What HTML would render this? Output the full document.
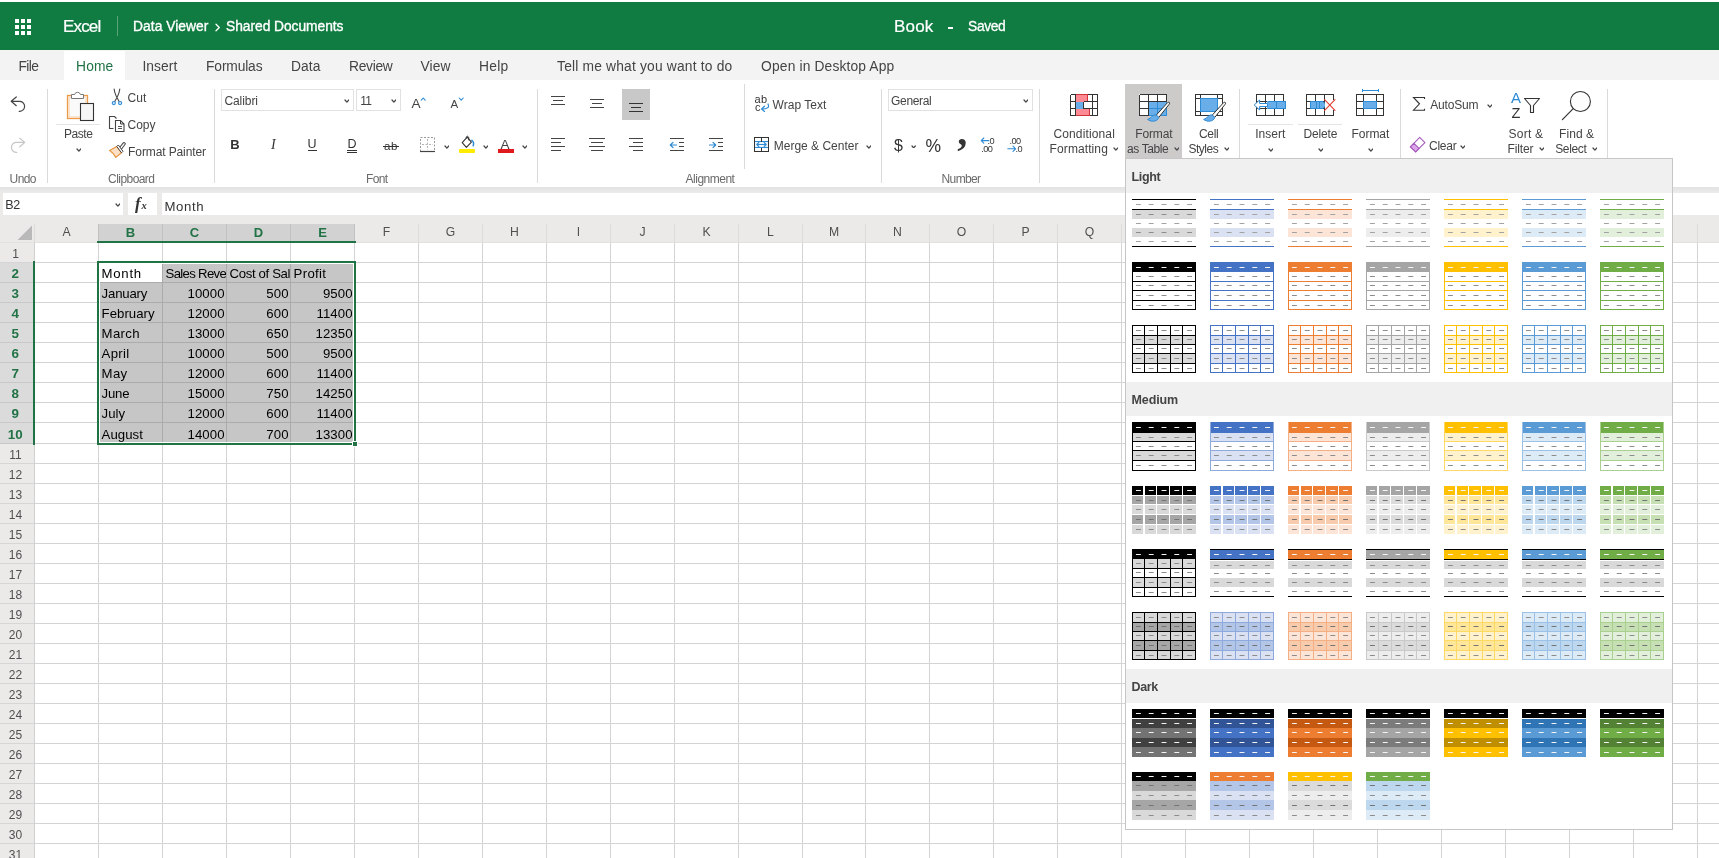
<!DOCTYPE html>
<html lang="en"><head><meta charset="utf-8"><title>Book - Excel</title>
<style>
*{box-sizing:border-box;margin:0;padding:0}
html,body{width:1719px;height:858px;overflow:hidden;background:#fff}
body{font-family:"Liberation Sans",sans-serif;position:relative}
#root{position:absolute;left:0;top:0;width:1719px;height:858px;overflow:hidden;will-change:transform}
#root div,#root svg.a{position:absolute}
.t{position:absolute;white-space:nowrap}
.c{position:absolute;white-space:nowrap;overflow:hidden;font-size:13.2px;line-height:19px;height:19px;color:#000}
</style></head>
<body><div id="root">
<div style="left:0px;top:2px;width:1719px;height:48px;background:#107c41;"></div>
<div style="left:15px;top:19px;width:4px;height:4px;background:#fff;"></div>
<div style="left:21px;top:19px;width:4px;height:4px;background:#fff;"></div>
<div style="left:27px;top:19px;width:4px;height:4px;background:#fff;"></div>
<div style="left:15px;top:25px;width:4px;height:4px;background:#fff;"></div>
<div style="left:21px;top:25px;width:4px;height:4px;background:#fff;"></div>
<div style="left:27px;top:25px;width:4px;height:4px;background:#fff;"></div>
<div style="left:15px;top:31px;width:4px;height:4px;background:#fff;"></div>
<div style="left:21px;top:31px;width:4px;height:4px;background:#fff;"></div>
<div style="left:27px;top:31px;width:4px;height:4px;background:#fff;"></div>
<span class="t" style="left:63.10px;top:17.71px;font-size:17px;line-height:17px;color:#fff;letter-spacing:-0.854px;-webkit-text-stroke:0.2px #fff;">Excel</span>
<div style="left:117px;top:16px;width:1px;height:20px;background:#5aa37c;"></div>
<span class="t" style="left:133.10px;top:19.62px;font-size:13.8px;line-height:13.8px;color:#fff;letter-spacing:0.035px;-webkit-text-stroke:0.35px #fff;">Data Viewer</span>
<svg class="a" style="left:213px;top:22px" width="8" height="10" viewBox="0 0 8 10"><path d="M3 2.2 L6.3 5.5 L3 8.8" fill="none" stroke="#fff" stroke-width="1.3" stroke-linecap="round" stroke-linejoin="round"/></svg>
<span class="t" style="left:226.10px;top:19.62px;font-size:13.8px;line-height:13.8px;color:#fff;letter-spacing:-0.051px;-webkit-text-stroke:0.35px #fff;">Shared Documents</span>
<span class="t" style="left:894.10px;top:17.71px;font-size:17px;line-height:17px;color:#fff;letter-spacing:0.138px;-webkit-text-stroke:0.2px #fff;">Book</span>
<div style="left:948px;top:27.4px;width:5px;height:1.3px;background:#fff;"></div>
<span class="t" style="left:968.10px;top:19.62px;font-size:13.8px;line-height:13.8px;color:#fff;letter-spacing:-0.365px;-webkit-text-stroke:0.3px #fff;">Saved</span>
<div style="left:0px;top:50px;width:1719px;height:30px;background:#f3f3f3;"></div>
<div style="left:64px;top:51px;width:61px;height:29px;background:#fff;"></div>
<span class="t" style="left:18.40px;top:60.42px;font-size:13.8px;line-height:13.8px;color:#444;letter-spacing:-0.559px;">File</span>
<span class="t" style="left:76.10px;top:60.42px;font-size:13.8px;line-height:13.8px;color:#217346;letter-spacing:0.123px;">Home</span>
<span class="t" style="left:142.40px;top:60.42px;font-size:13.8px;line-height:13.8px;color:#444;letter-spacing:0.082px;">Insert</span>
<span class="t" style="left:206.10px;top:60.42px;font-size:13.8px;line-height:13.8px;color:#444;letter-spacing:-0.151px;">Formulas</span>
<span class="t" style="left:291.10px;top:60.42px;font-size:13.8px;line-height:13.8px;color:#444;letter-spacing:0.038px;">Data</span>
<span class="t" style="left:349.10px;top:60.42px;font-size:13.8px;line-height:13.8px;color:#444;letter-spacing:-0.324px;">Review</span>
<span class="t" style="left:420.60px;top:60.42px;font-size:13.8px;line-height:13.8px;color:#444;letter-spacing:0.035px;">View</span>
<span class="t" style="left:479.10px;top:60.42px;font-size:13.8px;line-height:13.8px;color:#444;letter-spacing:0.230px;">Help</span>
<span class="t" style="left:557.10px;top:60.42px;font-size:13.8px;line-height:13.8px;color:#444;letter-spacing:0.186px;">Tell me what you want to do</span>
<span class="t" style="left:761.10px;top:60.42px;font-size:13.8px;line-height:13.8px;color:#444;letter-spacing:0.152px;">Open in Desktop App</span>
<div style="left:47px;top:89px;width:1px;height:94px;background:#dadada;"></div>
<div style="left:214px;top:89px;width:1px;height:94px;background:#dadada;"></div>
<div style="left:537px;top:89px;width:1px;height:94px;background:#dadada;"></div>
<div style="left:744px;top:84px;width:1px;height:85px;background:#dadada;"></div>
<div style="left:881px;top:89px;width:1px;height:94px;background:#dadada;"></div>
<div style="left:1039px;top:89px;width:1px;height:94px;background:#dadada;"></div>
<div style="left:1239px;top:89px;width:1px;height:94px;background:#dadada;"></div>
<div style="left:1400px;top:89px;width:1px;height:94px;background:#dadada;"></div>
<div style="left:1607px;top:89px;width:1px;height:94px;background:#dadada;"></div>
<svg class="a" style="left:0px;top:86px" width="40" height="80" viewBox="0 0 40 80"><path d="M11.2 15.3 H20 A5 5 0 0 1 19.2 25.3 M16.3 11 L11.2 15.3 L16.3 19.7" fill="none" stroke="#444" stroke-width="1.2" stroke-linecap="round" stroke-linejoin="round"/><path d="M24.8 56.4 H16 A5 5 0 0 0 16.8 66.4 M19.8 52.2 L24.8 56.4 L19.8 60.8" fill="none" stroke="#c6c6c6" stroke-width="1.2" stroke-linecap="round" stroke-linejoin="round"/></svg>
<span class="t" style="left:9.60px;top:172.94px;font-size:12px;line-height:12px;color:#6a6a6a;letter-spacing:-0.596px;">Undo</span>
<svg class="a" style="left:64px;top:88px" width="34" height="36" viewBox="0 0 34 36"><rect x="3.5" y="7.5" width="20" height="23" fill="#fafafa" stroke="#ea9a4a" stroke-width="1.3"/><rect x="5" y="9" width="17" height="20" fill="none" stroke="#fbdcbc" stroke-width="1.4"/><path d="M7.5 10.5 V6.5 H10.6 A3 3 0 0 1 16.4 6.5 H19.5 V10.5 Z" fill="#fff" stroke="#777" stroke-width="1"/><rect x="16.5" y="15.5" width="13" height="17" fill="#f6f6f6" stroke="#333" stroke-width="1.1"/></svg>
<div style="left:56px;top:124px;width:44px;height:1px;background:#e4e4e4;"></div>
<span class="t" style="left:64.10px;top:127.94px;font-size:12px;line-height:12px;color:#444;letter-spacing:-0.477px;">Paste</span>
<svg class="a" style="left:75.6px;top:147.5px" width="5.8" height="4.1" viewBox="-1 -1 5.8 4.1"><path d="M0 0 L1.9 2.1 L3.8 0" fill="none" stroke="#444" stroke-width="1.25" stroke-linecap="round" stroke-linejoin="round"/></svg>
<svg class="a" style="left:110px;top:88px" width="16" height="18" viewBox="0 0 16 18"><path d="M4.1 1 C4.6 5 6 8.5 9.3 13.7 M9.8 1 C9.3 5 7.9 8.5 4.6 13.7" fill="none" stroke="#444" stroke-width="1.1" stroke-linecap="round"/><circle cx="3.8" cy="15.1" r="1.6" fill="#cfe6f8" stroke="#2e8bd6" stroke-width="1.1"/><circle cx="10.1" cy="15.1" r="1.6" fill="#cfe6f8" stroke="#2e8bd6" stroke-width="1.1"/></svg>
<span class="t" style="left:127.60px;top:92.44px;font-size:12px;line-height:12px;color:#444;letter-spacing:0.042px;">Cut</span>
<svg class="a" style="left:108px;top:115px" width="18" height="18" viewBox="0 0 18 18"><path d="M5.5 13.5 H1.5 V1.5 H6.5 L8.5 3.5" fill="none" stroke="#444" stroke-width="1.1"/><path d="M7.5 5.5 H12.5 L16 9 V16.5 H7.5 Z" fill="#fff" stroke="#444" stroke-width="1.1"/><path d="M12.5 5.5 V9 H16" fill="none" stroke="#444" stroke-width="1"/><path d="M10 11.5 H14 M10 13.5 H14" stroke="#444" stroke-width="0.9"/></svg>
<span class="t" style="left:127.60px;top:119.44px;font-size:12px;line-height:12px;color:#444;letter-spacing:-0.053px;">Copy</span>
<svg class="a" style="left:108px;top:142px" width="18" height="18" viewBox="0 0 18 18"><path d="M8.8 4.5 L1.6 8.6 C4 10 6 12.5 7.8 15.4 L13.5 10.8 Z" fill="#fbe0c6" stroke="#e8913a" stroke-width="1.1" stroke-linejoin="round"/><path d="M12.8 6 L16 1.8" stroke="#444" stroke-width="3.4" stroke-linecap="round"/><path d="M12.8 6 L16 1.8" stroke="#fff" stroke-width="1.4" stroke-linecap="round"/><path d="M8.8 4.5 L10.3 3 L15 9.3 L13.5 10.8 Z" fill="#fff" stroke="#444" stroke-width="1" stroke-linejoin="round"/></svg>
<span class="t" style="left:128.10px;top:146.24px;font-size:12px;line-height:12px;color:#444;letter-spacing:-0.111px;">Format Painter</span>
<span class="t" style="left:108.10px;top:172.94px;font-size:12px;line-height:12px;color:#6a6a6a;letter-spacing:-0.562px;">Clipboard</span>
<div style="left:221px;top:89px;width:133px;height:22px;background:#fff;border:1px solid #e1e1e1;"></div>
<div style="left:356px;top:89px;width:45px;height:22px;background:#fff;border:1px solid #e1e1e1;"></div>
<span class="t" style="left:224.40px;top:95.44px;font-size:12px;line-height:12px;color:#444;letter-spacing:-0.072px;">Calibri</span>
<span class="t" style="left:360.20px;top:95.44px;font-size:12px;line-height:12px;color:#444;letter-spacing:-0.628px;">11</span>
<svg class="a" style="left:343.6px;top:98.5px" width="5.8" height="4.1" viewBox="-1 -1 5.8 4.1"><path d="M0 0 L1.9 2.1 L3.8 0" fill="none" stroke="#444" stroke-width="1.25" stroke-linecap="round" stroke-linejoin="round"/></svg>
<svg class="a" style="left:390.6px;top:98.5px" width="5.8" height="4.1" viewBox="-1 -1 5.8 4.1"><path d="M0 0 L1.9 2.1 L3.8 0" fill="none" stroke="#444" stroke-width="1.25" stroke-linecap="round" stroke-linejoin="round"/></svg>
<span class="t" style="left:411.60px;top:96.89px;font-size:13.6px;line-height:13.6px;color:#444;">A</span>
<svg class="a" style="left:420px;top:96px" width="7" height="6" viewBox="0 0 7 6"><path d="M1.2 4.2 L3.2 2 L5.2 4.2" fill="none" stroke="#2e8bd6" stroke-width="1.1" stroke-linecap="round" stroke-linejoin="round"/></svg>
<span class="t" style="left:450.60px;top:98.67px;font-size:11.5px;line-height:11.5px;color:#444;">A</span>
<svg class="a" style="left:458px;top:96px" width="7" height="6" viewBox="0 0 7 6"><path d="M1.2 2 L3.2 4.2 L5.2 2" fill="none" stroke="#2e8bd6" stroke-width="1.1" stroke-linecap="round" stroke-linejoin="round"/></svg>
<span class="t" style="left:230.20px;top:138.30px;font-size:13px;line-height:13px;color:#333;font-weight:700;">B</span>
<span class="t" style="left:271.10px;top:137.68px;font-size:14px;line-height:14px;color:#333;font-style:italic;font-family:'Liberation Serif',serif;">I</span>
<span class="t" style="left:307.60px;top:137.52px;font-size:12.5px;line-height:12.5px;color:#333;">U</span>
<div style="left:308px;top:150px;width:9px;height:1px;background:#333;"></div>
<span class="t" style="left:347.40px;top:137.52px;font-size:12.5px;line-height:12.5px;color:#333;">D</span>
<div style="left:347px;top:149.5px;width:10px;height:1px;background:#333;"></div>
<div style="left:347px;top:151.5px;width:10px;height:1px;background:#333;"></div>
<span class="t" style="left:384.10px;top:140.87px;font-size:11.5px;line-height:11.5px;color:#333;letter-spacing:0.505px;">ab</span>
<div style="left:383px;top:146px;width:16px;height:1px;background:#333;"></div>
<svg class="a" style="left:420px;top:137px" width="16" height="16" viewBox="0 0 16 16"><rect x="0.5" y="0.5" width="14" height="14" fill="none" stroke="#9a9a9a" stroke-width="1" stroke-dasharray="2 1.5"/><path d="M7.5 2 V13 M2 7.5 H13" stroke="#b5b5b5" stroke-width="1" stroke-dasharray="2 1.5"/><path d="M0 14.5 H15" stroke="#444" stroke-width="1.2"/></svg>
<svg class="a" style="left:443.6px;top:144.5px" width="5.8" height="4.1" viewBox="-1 -1 5.8 4.1"><path d="M0 0 L1.9 2.1 L3.8 0" fill="none" stroke="#444" stroke-width="1.25" stroke-linecap="round" stroke-linejoin="round"/></svg>
<div style="left:459px;top:149px;width:16px;height:4.2px;background:#ffeb00;border-radius:1px;"></div>
<svg class="a" style="left:460px;top:135px" width="16" height="14" viewBox="0 0 16 14"><path d="M2.2 7.6 L7.2 2.2 L11.4 7.2 L6.4 12.4 Z" fill="#fff" stroke="#333" stroke-width="1.1" stroke-linejoin="round"/><path d="M6.2 3.4 C5.8 0.6 8.8 0.4 8.8 3.6 L8.8 5.4" fill="none" stroke="#333" stroke-width="1"/><path d="M11.8 5.4 C13.6 6.6 13.8 9 13.2 10.8" fill="none" stroke="#2e8bd6" stroke-width="1.5" stroke-linecap="round"/></svg>
<svg class="a" style="left:482.6px;top:144.5px" width="5.8" height="4.1" viewBox="-1 -1 5.8 4.1"><path d="M0 0 L1.9 2.1 L3.8 0" fill="none" stroke="#444" stroke-width="1.25" stroke-linecap="round" stroke-linejoin="round"/></svg>
<div style="left:498px;top:149px;width:16px;height:4px;background:#e0191c;"></div>
<span class="t" style="left:500.60px;top:137.77px;font-size:13.5px;line-height:13.5px;color:#444;">A</span>
<svg class="a" style="left:521.6px;top:144.5px" width="5.8" height="4.1" viewBox="-1 -1 5.8 4.1"><path d="M0 0 L1.9 2.1 L3.8 0" fill="none" stroke="#444" stroke-width="1.25" stroke-linecap="round" stroke-linejoin="round"/></svg>
<span class="t" style="left:366.10px;top:172.94px;font-size:12px;line-height:12px;color:#6a6a6a;letter-spacing:-0.677px;">Font</span>
<div style="left:551px;top:95.7px;width:14px;height:1.1px;background:#444;"></div>
<div style="left:553px;top:100px;width:10px;height:1.1px;background:#444;"></div>
<div style="left:551px;top:104.1px;width:14px;height:1.1px;background:#444;"></div>
<div style="left:590px;top:99px;width:14px;height:1.1px;background:#444;"></div>
<div style="left:592px;top:103.1px;width:10px;height:1.1px;background:#444;"></div>
<div style="left:590px;top:107.2px;width:14px;height:1.1px;background:#444;"></div>
<div style="left:622px;top:89px;width:28px;height:31px;background:#c8c8c8;"></div>
<div style="left:629px;top:102.6px;width:14px;height:1.1px;background:#333;"></div>
<div style="left:631px;top:106.7px;width:10px;height:1.1px;background:#333;"></div>
<div style="left:629px;top:110.8px;width:14px;height:1.1px;background:#333;"></div>
<div style="left:551px;top:138px;width:14px;height:1.1px;background:#444;"></div>
<div style="left:551px;top:142.1px;width:10px;height:1.1px;background:#444;"></div>
<div style="left:551px;top:146.2px;width:14px;height:1.1px;background:#444;"></div>
<div style="left:551px;top:150.3px;width:10px;height:1.1px;background:#444;"></div>
<div style="left:589px;top:138px;width:16px;height:1.1px;background:#444;"></div>
<div style="left:591px;top:142.1px;width:12px;height:1.1px;background:#444;"></div>
<div style="left:589px;top:146.2px;width:16px;height:1.1px;background:#444;"></div>
<div style="left:591px;top:150.3px;width:12px;height:1.1px;background:#444;"></div>
<div style="left:629px;top:138px;width:14px;height:1.1px;background:#444;"></div>
<div style="left:633px;top:142.1px;width:10px;height:1.1px;background:#444;"></div>
<div style="left:629px;top:146.2px;width:14px;height:1.1px;background:#444;"></div>
<div style="left:633px;top:150.3px;width:10px;height:1.1px;background:#444;"></div>
<div style="left:670px;top:138px;width:14px;height:1.1px;background:#444;"></div>
<div style="left:679px;top:142.1px;width:5px;height:1.1px;background:#444;"></div>
<div style="left:679px;top:146.2px;width:5px;height:1.1px;background:#444;"></div>
<div style="left:670px;top:150.3px;width:14px;height:1.1px;background:#444;"></div>
<svg class="a" style="left:669px;top:140.5px" width="9" height="8" viewBox="0 0 9 8"><path d="M7.5 4 H1.5 M4 1.3 L1.3 4 L4 6.7" fill="none" stroke="#2e8bd6" stroke-width="1.2" stroke-linecap="round" stroke-linejoin="round"/></svg>
<div style="left:709px;top:138px;width:14px;height:1.1px;background:#444;"></div>
<div style="left:718px;top:142.1px;width:5px;height:1.1px;background:#444;"></div>
<div style="left:718px;top:146.2px;width:5px;height:1.1px;background:#444;"></div>
<div style="left:709px;top:150.3px;width:14px;height:1.1px;background:#444;"></div>
<svg class="a" style="left:708px;top:140.5px" width="9" height="8" viewBox="0 0 9 8"><path d="M1.5 4 H7.5 M5 1.3 L7.7 4 L5 6.7" fill="none" stroke="#2e8bd6" stroke-width="1.2" stroke-linecap="round" stroke-linejoin="round"/></svg>
<span class="t" style="left:685.60px;top:172.94px;font-size:12px;line-height:12px;color:#6a6a6a;letter-spacing:-0.507px;">Alignment</span>
<span class="t" style="left:754.60px;top:94.49px;font-size:11px;line-height:11px;color:#333;letter-spacing:0.283px;">ab</span>
<span class="t" style="left:754.90px;top:102.09px;font-size:11px;line-height:11px;color:#333;">c</span>
<svg class="a" style="left:760px;top:103px" width="10" height="9" viewBox="0 0 10 9"><path d="M8 1 C9.5 4 8 6 2 6 M4.5 3.2 L1.6 6 L4.5 8.5" fill="none" stroke="#2e8bd6" stroke-width="1.2" stroke-linecap="round" stroke-linejoin="round"/></svg>
<span class="t" style="left:772.60px;top:99.44px;font-size:12px;line-height:12px;color:#444;letter-spacing:0.025px;">Wrap Text</span>
<svg class="a" style="left:754px;top:137px" width="16" height="16" viewBox="0 0 16 16"><g shape-rendering="crispEdges"><rect x="0" y="0" width="15" height="15" fill="#fff"/><rect x="1" y="5" width="13" height="5" fill="#eef6fc"/><path d="M0.5 4.5 H14.5 M0.5 10.5 H14.5" stroke="#2e8bd6" stroke-width="1" fill="none"/><path d="M0.5 0.5 H14.5 V14.5 H0.5 Z M7.5 0.5 V4.5 M7.5 10.5 V14.5" stroke="#333" stroke-width="1" fill="none"/></g><path d="M2.8 7.5 H12.2 M4.8 5.5 L2.8 7.5 L4.8 9.5 M10.2 5.5 L12.2 7.5 L10.2 9.5" fill="none" stroke="#2e8bd6" stroke-width="1.1" stroke-linecap="round" stroke-linejoin="round"/></svg>
<span class="t" style="left:773.80px;top:139.94px;font-size:12px;line-height:12px;color:#444;letter-spacing:-0.007px;">Merge &amp; Center</span>
<svg class="a" style="left:865.6px;top:144.5px" width="5.8" height="4.1" viewBox="-1 -1 5.8 4.1"><path d="M0 0 L1.9 2.1 L3.8 0" fill="none" stroke="#444" stroke-width="1.25" stroke-linecap="round" stroke-linejoin="round"/></svg>
<div style="left:888px;top:89px;width:145px;height:22px;background:#fff;border:1px solid #e1e1e1;"></div>
<span class="t" style="left:891.10px;top:95.44px;font-size:12px;line-height:12px;color:#444;letter-spacing:-0.341px;">General</span>
<svg class="a" style="left:1022.6px;top:98.5px" width="5.8" height="4.1" viewBox="-1 -1 5.8 4.1"><path d="M0 0 L1.9 2.1 L3.8 0" fill="none" stroke="#444" stroke-width="1.25" stroke-linecap="round" stroke-linejoin="round"/></svg>
<span class="t" style="left:894.10px;top:138.06px;font-size:16px;line-height:16px;color:#333;">$</span>
<svg class="a" style="left:911.1px;top:144.5px" width="5.3" height="3.9" viewBox="-1 -1 5.3 3.9"><path d="M0 0 L1.65 1.9 L3.3 0" fill="none" stroke="#444" stroke-width="1.25" stroke-linecap="round" stroke-linejoin="round"/></svg>
<span class="t" style="left:925.60px;top:137.99px;font-size:17.5px;line-height:17.5px;color:#333;">%</span>
<span class="t" style="left:957.20px;top:111.80px;font-size:40px;line-height:40px;color:#333;font-weight:700;font-family:'Liberation Serif',serif;">,</span>
<svg class="a" style="left:980px;top:137px" width="16" height="16" viewBox="0 0 16 16"><text x="7.4" y="7.2" font-size="9.2" letter-spacing="-0.55" fill="#333" font-family="Liberation Sans,sans-serif">.0</text><text x="1.2" y="15.4" font-size="9.2" letter-spacing="-0.55" fill="#333" font-family="Liberation Sans,sans-serif">.00</text><path d="M8.8 3.6 H1.2 M3.8 1 L1.2 3.6 L3.8 6.2" fill="none" stroke="#2e8bd6" stroke-width="1.1" stroke-linecap="round" stroke-linejoin="round"/></svg>
<svg class="a" style="left:1007px;top:137px" width="17" height="16" viewBox="0 0 17 16"><text x="2.4" y="7.2" font-size="9.2" letter-spacing="-0.55" fill="#333" font-family="Liberation Sans,sans-serif">.00</text><text x="8.4" y="15.4" font-size="9.2" letter-spacing="-0.55" fill="#333" font-family="Liberation Sans,sans-serif">.0</text><path d="M0.8 11.8 H8.6 M6 9.2 L8.6 11.8 L6 14.4" fill="none" stroke="#2e8bd6" stroke-width="1.1" stroke-linecap="round" stroke-linejoin="round"/></svg>
<span class="t" style="left:941.60px;top:172.94px;font-size:12px;line-height:12px;color:#6a6a6a;letter-spacing:-0.646px;">Number</span>
<svg class="a" style="left:1070px;top:94px" width="28" height="22" viewBox="0 0 28 22"><g shape-rendering="crispEdges"><rect x="0" y="0" width="28" height="22" fill="#fff"/><rect x="6" y="1" width="12" height="7" fill="#ff8a94"/><rect x="6" y="15" width="14" height="6" fill="#ff8a94"/><rect x="6" y="8" width="7" height="7" fill="#69aee8"/><path d="M17.5 0.5 V7.5 M19.5 14.5 V21.5 M5.5 0.5 H17.5 M5.5 21.5 H19.5" stroke="#d13438" stroke-width="1" fill="none"/><path d="M0.5 0.5 H5.5 M17.5 0.5 H27.5 V21.5 H19.5 M5.5 21.5 H0.5 V0.5 M0.5 7.5 H5.5 M13.5 7.5 H27.5 M0.5 14.5 H5.5 M13.5 14.5 H27.5 M22.5 0.5 V21.5 M13.5 7.5 V14.5 M5.5 0.5 V21.5" fill="none" stroke="#333" stroke-width="1"/></g></svg>
<span class="t" style="left:1053.40px;top:128.24px;font-size:12px;line-height:12px;color:#444;letter-spacing:0.142px;">Conditional</span>
<span class="t" style="left:1049.60px;top:143.04px;font-size:12px;line-height:12px;color:#444;letter-spacing:0.095px;">Formatting</span>
<svg class="a" style="left:1112.6px;top:147px" width="5.8" height="4.1" viewBox="-1 -1 5.8 4.1"><path d="M0 0 L1.9 2.1 L3.8 0" fill="none" stroke="#444" stroke-width="1.25" stroke-linecap="round" stroke-linejoin="round"/></svg>
<div style="left:1125px;top:84px;width:57px;height:76px;background:#cccbca;"></div>
<svg class="a" style="left:1139px;top:94px" width="33" height="30" viewBox="0 0 33 30"><g shape-rendering="crispEdges"><rect x="0" y="0" width="28" height="22" fill="#fff"/><rect x="10" y="8" width="17" height="13" fill="#69aee8"/><path d="M0.5 0.5 H27.5 V7.5 M0.5 0.5 V21.5 H9.5 M0.5 7.5 H27.5 M0.5 14.5 H9.5 M9.5 0.5 V21.5 M18.5 0.5 V7.5" stroke="#333" stroke-width="1" fill="none"/><path d="M9.5 21.5 H27.5 V7.5 M9.5 14.5 H27.5 M18.5 7.5 V21.5" stroke="#2e8bd6" stroke-width="1" fill="none"/></g><path d="M28.6 8.6 C30.2 7.6 31.2 8.8 30.2 10.2 L19.8 23.4 L17.2 21.2 Z" fill="#fff" stroke="#333" stroke-width="1"/><path d="M17.2 21 C13.8 20.2 12.6 24.2 8.6 25.4 C12.2 28.4 18.8 27.6 19.8 23.4 Z" fill="#69aee8" stroke="#2e8bd6" stroke-width="1"/></svg>
<span class="t" style="left:1135.20px;top:128.24px;font-size:12px;line-height:12px;color:#444;letter-spacing:-0.133px;">Format</span>
<span class="t" style="left:1127.10px;top:143.04px;font-size:12px;line-height:12px;color:#444;letter-spacing:-0.397px;">as Table</span>
<svg class="a" style="left:1173.6px;top:147px" width="5.8" height="4.1" viewBox="-1 -1 5.8 4.1"><path d="M0 0 L1.9 2.1 L3.8 0" fill="none" stroke="#444" stroke-width="1.25" stroke-linecap="round" stroke-linejoin="round"/></svg>
<svg class="a" style="left:1195px;top:94px" width="33" height="30" viewBox="0 0 33 30"><g shape-rendering="crispEdges"><rect x="0" y="0" width="28" height="22" fill="#fff"/><rect x="6" y="5" width="17" height="12" fill="#69aee8"/><path d="M0.5 0.5 H27.5 V21.5 H0.5 Z M0.5 4.5 H27.5 M0.5 17.5 H27.5 M5.5 0.5 V21.5 M22.5 0.5 V21.5" stroke="#333" stroke-width="1" fill="none"/><path d="M5.5 4.5 H22.5 V17.5 H5.5 Z" stroke="#2e8bd6" stroke-width="1" fill="none"/></g><path d="M28.6 8.6 C30.2 7.6 31.2 8.8 30.2 10.2 L19.8 23.4 L17.2 21.2 Z" fill="#fff" stroke="#333" stroke-width="1"/><path d="M17.2 21 C13.8 20.2 12.6 24.2 8.6 25.4 C12.2 28.4 18.8 27.6 19.8 23.4 Z" fill="#69aee8" stroke="#2e8bd6" stroke-width="1"/></svg>
<span class="t" style="left:1199.00px;top:128.24px;font-size:12px;line-height:12px;color:#444;letter-spacing:-0.318px;">Cell</span>
<span class="t" style="left:1188.40px;top:143.04px;font-size:12px;line-height:12px;color:#444;letter-spacing:-0.480px;">Styles</span>
<svg class="a" style="left:1223.6px;top:147px" width="5.8" height="4.1" viewBox="-1 -1 5.8 4.1"><path d="M0 0 L1.9 2.1 L3.8 0" fill="none" stroke="#444" stroke-width="1.25" stroke-linecap="round" stroke-linejoin="round"/></svg>
<svg class="a" style="left:1253px;top:94px" width="34" height="22" viewBox="0 0 34 22"><g shape-rendering="crispEdges"><rect x="3" y="0" width="28" height="22" fill="#fff"/><path d="M3.5 0.5 H30.5 V21.5 H3.5 Z M12.5 0.5 V21.5 M21.5 0.5 V21.5 M3.5 7.5 H30.5 M3.5 14.5 H30.5" stroke="#333" stroke-width="1" fill="none"/><rect x="14" y="7" width="19" height="8" fill="#69aee8"/><path d="M14.5 7.5 H32.5 V14.5 H14.5 M23.5 7.5 V14.5" stroke="#2e8bd6" stroke-width="1" fill="none"/></g><path d="M14.5 9.5 H6.6 V6 L1.2 11 L6.6 16 V12.5 H14.5 Z" fill="#fff" stroke="#2e8bd6" stroke-width="1" stroke-linejoin="round"/></svg>
<div style="left:1248px;top:124px;width:45px;height:1px;background:#e4e4e4;"></div>
<span class="t" style="left:1255.20px;top:128.24px;font-size:12px;line-height:12px;color:#444;letter-spacing:0.032px;">Insert</span>
<svg class="a" style="left:1267.6px;top:147.5px" width="5.8" height="4.1" viewBox="-1 -1 5.8 4.1"><path d="M0 0 L1.9 2.1 L3.8 0" fill="none" stroke="#444" stroke-width="1.25" stroke-linecap="round" stroke-linejoin="round"/></svg>
<svg class="a" style="left:1306px;top:94px" width="32" height="22" viewBox="0 0 32 22"><g shape-rendering="crispEdges"><rect x="0" y="0" width="28" height="22" fill="#fff"/><path d="M0.5 0.5 H27.5 V21.5 H0.5 Z M9.5 0.5 V21.5 M18.5 0.5 V21.5 M0.5 7.5 H27.5 M0.5 14.5 H27.5" stroke="#333" stroke-width="1" fill="none"/></g><path d="M4.5 7.5 H17 L20.5 11 L17 14.5 H4.5 Z" fill="#69aee8" stroke="#2e8bd6" stroke-width="1"/><path d="M10.5 7.5 V14.5 M13.5 7.5 V14.5" stroke="#2e8bd6" stroke-width="1"/><rect x="19" y="6" width="11" height="10" fill="#fff"/><path d="M18.6 5.6 L29 16.4 M29 5.6 L18.6 16.4" stroke="#e03c31" stroke-width="1.1" stroke-linecap="round"/></svg>
<div style="left:1298px;top:124px;width:44px;height:1px;background:#e4e4e4;"></div>
<span class="t" style="left:1303.40px;top:128.24px;font-size:12px;line-height:12px;color:#444;letter-spacing:-0.114px;">Delete</span>
<svg class="a" style="left:1317.6px;top:147.5px" width="5.8" height="4.1" viewBox="-1 -1 5.8 4.1"><path d="M0 0 L1.9 2.1 L3.8 0" fill="none" stroke="#444" stroke-width="1.25" stroke-linecap="round" stroke-linejoin="round"/></svg>
<svg class="a" style="left:1356px;top:88px" width="28" height="28" viewBox="0 0 28 28"><g shape-rendering="crispEdges"><rect x="0" y="6" width="28" height="22" fill="#fff"/><path d="M0.5 6.5 H27.5 V27.5 H0.5 Z M7.5 6.5 V27.5 M20.5 6.5 V27.5 M0.5 13.5 H27.5 M0.5 20.5 H27.5" stroke="#333" stroke-width="1" fill="none"/><rect x="8" y="14" width="12" height="6" fill="#69aee8"/><path d="M7.5 13.5 H20.5 V20.5 H7.5 Z" stroke="#2e8bd6" stroke-width="1" fill="none"/><path d="M6.5 2.5 H22.5 M6.5 1 V4 M22.5 1 V4" stroke="#2e8bd6" stroke-width="1"/></g></svg>
<span class="t" style="left:1351.60px;top:128.24px;font-size:12px;line-height:12px;color:#444;letter-spacing:-0.067px;">Format</span>
<svg class="a" style="left:1367.6px;top:147.5px" width="5.8" height="4.1" viewBox="-1 -1 5.8 4.1"><path d="M0 0 L1.9 2.1 L3.8 0" fill="none" stroke="#444" stroke-width="1.25" stroke-linecap="round" stroke-linejoin="round"/></svg>
<svg class="a" style="left:1412px;top:96px" width="14" height="16" viewBox="0 0 14 16"><path d="M12.5 3 V1.5 H1.5 L7.5 7.8 L1.5 14.2 H12.5 V12.7" fill="none" stroke="#333" stroke-width="1.1" stroke-linejoin="miter"/></svg>
<span class="t" style="left:1430.20px;top:99.44px;font-size:12px;line-height:12px;color:#444;letter-spacing:-0.165px;">AutoSum</span>
<svg class="a" style="left:1486.6px;top:103.5px" width="5.8" height="4.1" viewBox="-1 -1 5.8 4.1"><path d="M0 0 L1.9 2.1 L3.8 0" fill="none" stroke="#444" stroke-width="1.25" stroke-linecap="round" stroke-linejoin="round"/></svg>
<svg class="a" style="left:1409px;top:136px" width="18" height="18" viewBox="0 0 18 18"><path d="M10.7 1.4 L15.9 6.6 L6.7 15.9 L1.4 10.8 Z" fill="#fff" stroke="#a45bbb" stroke-width="1.1" stroke-linejoin="round"/><path d="M4.9 7.3 L10.1 12.4 L6.7 15.9 L1.4 10.8 Z" fill="#dda6ea" stroke="#a45bbb" stroke-width="1.1" stroke-linejoin="round"/></svg>
<span class="t" style="left:1429.00px;top:139.94px;font-size:12px;line-height:12px;color:#444;letter-spacing:-0.255px;">Clear</span>
<svg class="a" style="left:1459.6px;top:144.5px" width="5.8" height="4.1" viewBox="-1 -1 5.8 4.1"><path d="M0 0 L1.9 2.1 L3.8 0" fill="none" stroke="#444" stroke-width="1.25" stroke-linecap="round" stroke-linejoin="round"/></svg>
<span class="t" style="left:1511.10px;top:90.10px;font-size:15px;line-height:15px;color:#2e8bd6;">A</span>
<span class="t" style="left:1511.60px;top:105.93px;font-size:14.5px;line-height:14.5px;color:#333;">Z</span>
<svg class="a" style="left:1523px;top:97px" width="18" height="18" viewBox="0 0 18 18"><path d="M1.5 1.5 H16.5 L10.5 8.5 V15.5 H7.5 V8.5 Z" fill="#fafafa" stroke="#333" stroke-width="1.1" stroke-linejoin="round"/></svg>
<span class="t" style="left:1508.60px;top:128.24px;font-size:12px;line-height:12px;color:#444;letter-spacing:0.209px;">Sort &amp;</span>
<span class="t" style="left:1507.60px;top:143.04px;font-size:12px;line-height:12px;color:#444;letter-spacing:-0.144px;">Filter</span>
<svg class="a" style="left:1538.6px;top:147px" width="5.8" height="4.1" viewBox="-1 -1 5.8 4.1"><path d="M0 0 L1.9 2.1 L3.8 0" fill="none" stroke="#444" stroke-width="1.25" stroke-linecap="round" stroke-linejoin="round"/></svg>
<svg class="a" style="left:1560px;top:89px" width="34" height="32" viewBox="0 0 34 32"><circle cx="20.4" cy="12.5" r="10" fill="#fdfdfd" stroke="#333" stroke-width="1.1"/><path d="M13.2 19.6 L2.4 30.6" stroke="#333" stroke-width="1.2" stroke-linecap="round"/></svg>
<span class="t" style="left:1559.00px;top:128.24px;font-size:12px;line-height:12px;color:#444;letter-spacing:0.087px;">Find &amp;</span>
<span class="t" style="left:1555.20px;top:143.04px;font-size:12px;line-height:12px;color:#444;letter-spacing:-0.358px;">Select</span>
<svg class="a" style="left:1591.6px;top:147px" width="5.8" height="4.1" viewBox="-1 -1 5.8 4.1"><path d="M0 0 L1.9 2.1 L3.8 0" fill="none" stroke="#444" stroke-width="1.25" stroke-linecap="round" stroke-linejoin="round"/></svg>
<div style="left:0px;top:187px;width:1719px;height:6px;background:linear-gradient(#e2e2e2,#ececec);"></div>
<div style="left:0px;top:193px;width:1719px;height:22px;background:#fff;"></div>
<div style="left:0px;top:193px;width:3px;height:22px;background:#ebeae9;"></div>
<div style="left:123px;top:193px;width:5px;height:22px;background:#ebeae9;"></div>
<div style="left:157px;top:193px;width:5px;height:22px;background:#ebeae9;"></div>
<span class="t" style="left:5.20px;top:199.22px;font-size:12.5px;line-height:12.5px;color:#333;letter-spacing:-0.245px;">B2</span>
<svg class="a" style="left:114.6px;top:202.5px" width="5.8" height="4.1" viewBox="-1 -1 5.8 4.1"><path d="M0 0 L1.9 2.1 L3.8 0" fill="none" stroke="#444" stroke-width="1.25" stroke-linecap="round" stroke-linejoin="round"/></svg>
<span class="t" style="left:135.10px;top:194.99px;font-size:17px;line-height:17px;color:#333;font-weight:700;font-style:italic;font-family:'Liberation Serif',serif;">f</span>
<span class="t" style="left:141.60px;top:201.19px;font-size:10.5px;line-height:10.5px;color:#333;font-style:italic;font-family:'Liberation Serif',serif;font-weight:700;">x</span>
<span class="t" style="left:164.40px;top:199.63px;font-size:13.2px;line-height:13.2px;color:#333;letter-spacing:0.663px;">Month</span>
<div style="left:0px;top:215px;width:1719px;height:28px;background:#ebeae9;"></div>
<div style="left:0px;top:242px;width:1719px;height:1px;background:#e2e1e0;"></div>
<div style="left:98px;top:224px;width:257px;height:17px;background:#d2d2d2;"></div>
<div style="left:34px;top:224px;width:1px;height:19px;background:#dddcdb;"></div>
<div style="left:98px;top:224px;width:1px;height:19px;background:#c2c2c2;"></div>
<div style="left:162px;top:224px;width:1px;height:19px;background:#c2c2c2;"></div>
<div style="left:226px;top:224px;width:1px;height:19px;background:#c2c2c2;"></div>
<div style="left:290px;top:224px;width:1px;height:19px;background:#c2c2c2;"></div>
<div style="left:354px;top:224px;width:1px;height:19px;background:#c2c2c2;"></div>
<div style="left:418px;top:224px;width:1px;height:19px;background:#dddcdb;"></div>
<div style="left:482px;top:224px;width:1px;height:19px;background:#dddcdb;"></div>
<div style="left:546px;top:224px;width:1px;height:19px;background:#dddcdb;"></div>
<div style="left:610px;top:224px;width:1px;height:19px;background:#dddcdb;"></div>
<div style="left:674px;top:224px;width:1px;height:19px;background:#dddcdb;"></div>
<div style="left:738px;top:224px;width:1px;height:19px;background:#dddcdb;"></div>
<div style="left:802px;top:224px;width:1px;height:19px;background:#dddcdb;"></div>
<div style="left:865px;top:224px;width:1px;height:19px;background:#dddcdb;"></div>
<div style="left:929px;top:224px;width:1px;height:19px;background:#dddcdb;"></div>
<div style="left:993px;top:224px;width:1px;height:19px;background:#dddcdb;"></div>
<div style="left:1057px;top:224px;width:1px;height:19px;background:#dddcdb;"></div>
<div style="left:1121px;top:224px;width:1px;height:19px;background:#dddcdb;"></div>
<div style="left:1185px;top:224px;width:1px;height:19px;background:#dddcdb;"></div>
<div style="left:1249px;top:224px;width:1px;height:19px;background:#dddcdb;"></div>
<div style="left:1313px;top:224px;width:1px;height:19px;background:#dddcdb;"></div>
<div style="left:1377px;top:224px;width:1px;height:19px;background:#dddcdb;"></div>
<div style="left:1441px;top:224px;width:1px;height:19px;background:#dddcdb;"></div>
<div style="left:1505px;top:224px;width:1px;height:19px;background:#dddcdb;"></div>
<div style="left:1569px;top:224px;width:1px;height:19px;background:#dddcdb;"></div>
<div style="left:1633px;top:224px;width:1px;height:19px;background:#dddcdb;"></div>
<div style="left:1697px;top:224px;width:1px;height:19px;background:#dddcdb;"></div>
<div style="left:97px;top:241px;width:259px;height:2px;background:#217346;"></div>
<svg class="a" style="left:16px;top:224px" width="17" height="17" viewBox="0 0 17 17"><path d="M16 1.5 V16 H1.5 Z" fill="#b9b9b9"/></svg>
<span class="t" style="left:62.43px;top:226.17px;font-size:12.2px;line-height:12.2px;color:#505050;">A</span>
<span class="t" style="left:125.81px;top:225.50px;font-size:13px;line-height:13px;color:#217346;font-weight:700;">B</span>
<span class="t" style="left:189.81px;top:225.50px;font-size:13px;line-height:13px;color:#217346;font-weight:700;">C</span>
<span class="t" style="left:253.81px;top:225.50px;font-size:13px;line-height:13px;color:#217346;font-weight:700;">D</span>
<span class="t" style="left:318.16px;top:225.50px;font-size:13px;line-height:13px;color:#217346;font-weight:700;">E</span>
<span class="t" style="left:382.77px;top:226.17px;font-size:12.2px;line-height:12.2px;color:#505050;">F</span>
<span class="t" style="left:445.76px;top:226.17px;font-size:12.2px;line-height:12.2px;color:#505050;">G</span>
<span class="t" style="left:510.09px;top:226.17px;font-size:12.2px;line-height:12.2px;color:#505050;">H</span>
<span class="t" style="left:576.81px;top:226.17px;font-size:12.2px;line-height:12.2px;color:#505050;">I</span>
<span class="t" style="left:639.45px;top:226.17px;font-size:12.2px;line-height:12.2px;color:#505050;">J</span>
<span class="t" style="left:702.43px;top:226.17px;font-size:12.2px;line-height:12.2px;color:#505050;">K</span>
<span class="t" style="left:767.11px;top:226.17px;font-size:12.2px;line-height:12.2px;color:#505050;">L</span>
<span class="t" style="left:828.92px;top:226.17px;font-size:12.2px;line-height:12.2px;color:#505050;">M</span>
<span class="t" style="left:893.09px;top:226.17px;font-size:12.2px;line-height:12.2px;color:#505050;">N</span>
<span class="t" style="left:956.76px;top:226.17px;font-size:12.2px;line-height:12.2px;color:#505050;">O</span>
<span class="t" style="left:1021.43px;top:226.17px;font-size:12.2px;line-height:12.2px;color:#505050;">P</span>
<span class="t" style="left:1084.76px;top:226.17px;font-size:12.2px;line-height:12.2px;color:#505050;">Q</span>
<span class="t" style="left:1149.09px;top:226.17px;font-size:12.2px;line-height:12.2px;color:#505050;">R</span>
<span class="t" style="left:1213.43px;top:226.17px;font-size:12.2px;line-height:12.2px;color:#505050;">S</span>
<span class="t" style="left:1277.77px;top:226.17px;font-size:12.2px;line-height:12.2px;color:#505050;">T</span>
<span class="t" style="left:1341.09px;top:226.17px;font-size:12.2px;line-height:12.2px;color:#505050;">U</span>
<span class="t" style="left:1405.43px;top:226.17px;font-size:12.2px;line-height:12.2px;color:#505050;">V</span>
<span class="t" style="left:1467.74px;top:226.17px;font-size:12.2px;line-height:12.2px;color:#505050;">W</span>
<span class="t" style="left:1533.43px;top:226.17px;font-size:12.2px;line-height:12.2px;color:#505050;">X</span>
<span class="t" style="left:1597.43px;top:226.17px;font-size:12.2px;line-height:12.2px;color:#505050;">Y</span>
<span class="t" style="left:1661.77px;top:226.17px;font-size:12.2px;line-height:12.2px;color:#505050;">Z</span>
<div style="left:34px;top:243px;width:1685px;height:615px;background:#fff"><div style="left:64px;top:0;width:1px;height:615px;background:#d4d4d4"></div><div style="left:128px;top:0;width:1px;height:615px;background:#d4d4d4"></div><div style="left:192px;top:0;width:1px;height:615px;background:#d4d4d4"></div><div style="left:256px;top:0;width:1px;height:615px;background:#d4d4d4"></div><div style="left:320px;top:0;width:1px;height:615px;background:#d4d4d4"></div><div style="left:384px;top:0;width:1px;height:615px;background:#d4d4d4"></div><div style="left:448px;top:0;width:1px;height:615px;background:#d4d4d4"></div><div style="left:512px;top:0;width:1px;height:615px;background:#d4d4d4"></div><div style="left:576px;top:0;width:1px;height:615px;background:#d4d4d4"></div><div style="left:640px;top:0;width:1px;height:615px;background:#d4d4d4"></div><div style="left:704px;top:0;width:1px;height:615px;background:#d4d4d4"></div><div style="left:768px;top:0;width:1px;height:615px;background:#d4d4d4"></div><div style="left:831px;top:0;width:1px;height:615px;background:#d4d4d4"></div><div style="left:895px;top:0;width:1px;height:615px;background:#d4d4d4"></div><div style="left:959px;top:0;width:1px;height:615px;background:#d4d4d4"></div><div style="left:1023px;top:0;width:1px;height:615px;background:#d4d4d4"></div><div style="left:1087px;top:0;width:1px;height:615px;background:#d4d4d4"></div><div style="left:1151px;top:0;width:1px;height:615px;background:#d4d4d4"></div><div style="left:1215px;top:0;width:1px;height:615px;background:#d4d4d4"></div><div style="left:1279px;top:0;width:1px;height:615px;background:#d4d4d4"></div><div style="left:1343px;top:0;width:1px;height:615px;background:#d4d4d4"></div><div style="left:1407px;top:0;width:1px;height:615px;background:#d4d4d4"></div><div style="left:1471px;top:0;width:1px;height:615px;background:#d4d4d4"></div><div style="left:1535px;top:0;width:1px;height:615px;background:#d4d4d4"></div><div style="left:1599px;top:0;width:1px;height:615px;background:#d4d4d4"></div><div style="left:1663px;top:0;width:1px;height:615px;background:#d4d4d4"></div><div style="left:0;top:19px;width:1685px;height:1px;background:#d4d4d4"></div><div style="left:0;top:39px;width:1685px;height:1px;background:#d4d4d4"></div><div style="left:0;top:59px;width:1685px;height:1px;background:#d4d4d4"></div><div style="left:0;top:79px;width:1685px;height:1px;background:#d4d4d4"></div><div style="left:0;top:99px;width:1685px;height:1px;background:#d4d4d4"></div><div style="left:0;top:119px;width:1685px;height:1px;background:#d4d4d4"></div><div style="left:0;top:139px;width:1685px;height:1px;background:#d4d4d4"></div><div style="left:0;top:159px;width:1685px;height:1px;background:#d4d4d4"></div><div style="left:0;top:179px;width:1685px;height:1px;background:#d4d4d4"></div><div style="left:0;top:200px;width:1685px;height:1px;background:#d4d4d4"></div><div style="left:0;top:220px;width:1685px;height:1px;background:#d4d4d4"></div><div style="left:0;top:240px;width:1685px;height:1px;background:#d4d4d4"></div><div style="left:0;top:260px;width:1685px;height:1px;background:#d4d4d4"></div><div style="left:0;top:280px;width:1685px;height:1px;background:#d4d4d4"></div><div style="left:0;top:300px;width:1685px;height:1px;background:#d4d4d4"></div><div style="left:0;top:320px;width:1685px;height:1px;background:#d4d4d4"></div><div style="left:0;top:340px;width:1685px;height:1px;background:#d4d4d4"></div><div style="left:0;top:360px;width:1685px;height:1px;background:#d4d4d4"></div><div style="left:0;top:380px;width:1685px;height:1px;background:#d4d4d4"></div><div style="left:0;top:400px;width:1685px;height:1px;background:#d4d4d4"></div><div style="left:0;top:420px;width:1685px;height:1px;background:#d4d4d4"></div><div style="left:0;top:440px;width:1685px;height:1px;background:#d4d4d4"></div><div style="left:0;top:460px;width:1685px;height:1px;background:#d4d4d4"></div><div style="left:0;top:480px;width:1685px;height:1px;background:#d4d4d4"></div><div style="left:0;top:500px;width:1685px;height:1px;background:#d4d4d4"></div><div style="left:0;top:520px;width:1685px;height:1px;background:#d4d4d4"></div><div style="left:0;top:540px;width:1685px;height:1px;background:#d4d4d4"></div><div style="left:0;top:560px;width:1685px;height:1px;background:#d4d4d4"></div><div style="left:0;top:580px;width:1685px;height:1px;background:#d4d4d4"></div><div style="left:0;top:600px;width:1685px;height:1px;background:#d4d4d4"></div></div>
<div style="left:0;top:243px;width:34px;height:615px;background:#ebeae9"><div style="left:0;top:20px;width:33px;height:180px;background:#dbdbdb"></div><div style="left:0;top:19px;width:34px;height:1px;background:#d6d6d6"></div><div style="left:0;top:39px;width:34px;height:1px;background:#c8c8c8"></div><div style="left:0;top:59px;width:34px;height:1px;background:#c8c8c8"></div><div style="left:0;top:79px;width:34px;height:1px;background:#c8c8c8"></div><div style="left:0;top:99px;width:34px;height:1px;background:#c8c8c8"></div><div style="left:0;top:119px;width:34px;height:1px;background:#c8c8c8"></div><div style="left:0;top:139px;width:34px;height:1px;background:#c8c8c8"></div><div style="left:0;top:159px;width:34px;height:1px;background:#c8c8c8"></div><div style="left:0;top:179px;width:34px;height:1px;background:#c8c8c8"></div><div style="left:0;top:200px;width:34px;height:1px;background:#c8c8c8"></div><div style="left:0;top:220px;width:34px;height:1px;background:#d6d6d6"></div><div style="left:0;top:240px;width:34px;height:1px;background:#d6d6d6"></div><div style="left:0;top:260px;width:34px;height:1px;background:#d6d6d6"></div><div style="left:0;top:280px;width:34px;height:1px;background:#d6d6d6"></div><div style="left:0;top:300px;width:34px;height:1px;background:#d6d6d6"></div><div style="left:0;top:320px;width:34px;height:1px;background:#d6d6d6"></div><div style="left:0;top:340px;width:34px;height:1px;background:#d6d6d6"></div><div style="left:0;top:360px;width:34px;height:1px;background:#d6d6d6"></div><div style="left:0;top:380px;width:34px;height:1px;background:#d6d6d6"></div><div style="left:0;top:400px;width:34px;height:1px;background:#d6d6d6"></div><div style="left:0;top:420px;width:34px;height:1px;background:#d6d6d6"></div><div style="left:0;top:440px;width:34px;height:1px;background:#d6d6d6"></div><div style="left:0;top:460px;width:34px;height:1px;background:#d6d6d6"></div><div style="left:0;top:480px;width:34px;height:1px;background:#d6d6d6"></div><div style="left:0;top:500px;width:34px;height:1px;background:#d6d6d6"></div><div style="left:0;top:520px;width:34px;height:1px;background:#d6d6d6"></div><div style="left:0;top:540px;width:34px;height:1px;background:#d6d6d6"></div><div style="left:0;top:560px;width:34px;height:1px;background:#d6d6d6"></div><div style="left:0;top:580px;width:34px;height:1px;background:#d6d6d6"></div><div style="left:0;top:600px;width:34px;height:1px;background:#d6d6d6"></div></div>
<div style="left:34px;top:243px;width:1px;height:615px;background:#d0d0d0;"></div>
<div style="left:33px;top:261px;width:2px;height:184px;background:#217346;"></div>
<span class="t" style="left:12.16px;top:248.04px;font-size:12px;line-height:12px;color:#505050;">1</span>
<span class="t" style="left:11.47px;top:266.86px;font-size:13.4px;line-height:13.4px;color:#217346;font-weight:700;">2</span>
<span class="t" style="left:11.47px;top:286.86px;font-size:13.4px;line-height:13.4px;color:#217346;font-weight:700;">3</span>
<span class="t" style="left:11.47px;top:306.86px;font-size:13.4px;line-height:13.4px;color:#217346;font-weight:700;">4</span>
<span class="t" style="left:11.47px;top:326.86px;font-size:13.4px;line-height:13.4px;color:#217346;font-weight:700;">5</span>
<span class="t" style="left:11.47px;top:346.86px;font-size:13.4px;line-height:13.4px;color:#217346;font-weight:700;">6</span>
<span class="t" style="left:11.47px;top:366.86px;font-size:13.4px;line-height:13.4px;color:#217346;font-weight:700;">7</span>
<span class="t" style="left:11.47px;top:386.86px;font-size:13.4px;line-height:13.4px;color:#217346;font-weight:700;">8</span>
<span class="t" style="left:11.47px;top:406.86px;font-size:13.4px;line-height:13.4px;color:#217346;font-weight:700;">9</span>
<span class="t" style="left:7.75px;top:427.86px;font-size:13.4px;line-height:13.4px;color:#217346;font-weight:700;">10</span>
<span class="t" style="left:9.27px;top:449.04px;font-size:12px;line-height:12px;color:#505050;">11</span>
<span class="t" style="left:8.83px;top:469.04px;font-size:12px;line-height:12px;color:#505050;">12</span>
<span class="t" style="left:8.83px;top:489.04px;font-size:12px;line-height:12px;color:#505050;">13</span>
<span class="t" style="left:8.83px;top:509.04px;font-size:12px;line-height:12px;color:#505050;">14</span>
<span class="t" style="left:8.83px;top:529.04px;font-size:12px;line-height:12px;color:#505050;">15</span>
<span class="t" style="left:8.83px;top:549.04px;font-size:12px;line-height:12px;color:#505050;">16</span>
<span class="t" style="left:8.83px;top:569.04px;font-size:12px;line-height:12px;color:#505050;">17</span>
<span class="t" style="left:8.83px;top:589.04px;font-size:12px;line-height:12px;color:#505050;">18</span>
<span class="t" style="left:8.83px;top:609.04px;font-size:12px;line-height:12px;color:#505050;">19</span>
<span class="t" style="left:8.83px;top:629.04px;font-size:12px;line-height:12px;color:#505050;">20</span>
<span class="t" style="left:8.83px;top:649.04px;font-size:12px;line-height:12px;color:#505050;">21</span>
<span class="t" style="left:8.83px;top:669.04px;font-size:12px;line-height:12px;color:#505050;">22</span>
<span class="t" style="left:8.83px;top:689.04px;font-size:12px;line-height:12px;color:#505050;">23</span>
<span class="t" style="left:8.83px;top:709.04px;font-size:12px;line-height:12px;color:#505050;">24</span>
<span class="t" style="left:8.83px;top:729.04px;font-size:12px;line-height:12px;color:#505050;">25</span>
<span class="t" style="left:8.83px;top:749.04px;font-size:12px;line-height:12px;color:#505050;">26</span>
<span class="t" style="left:8.83px;top:769.04px;font-size:12px;line-height:12px;color:#505050;">27</span>
<span class="t" style="left:8.83px;top:789.04px;font-size:12px;line-height:12px;color:#505050;">28</span>
<span class="t" style="left:8.83px;top:809.04px;font-size:12px;line-height:12px;color:#505050;">29</span>
<span class="t" style="left:8.83px;top:829.04px;font-size:12px;line-height:12px;color:#505050;">30</span>
<span class="t" style="left:8.83px;top:849.04px;font-size:12px;line-height:12px;color:#505050;">31</span>
<div style="left:100px;top:264px;width:254px;height:178px;background:#c6c6c6"><div style="left:62px;top:0;width:1px;height:178px;background:#ababab"></div><div style="left:126px;top:0;width:1px;height:178px;background:#ababab"></div><div style="left:190px;top:0;width:1px;height:178px;background:#ababab"></div><div style="left:0;top:18px;width:254px;height:1px;background:#ababab"></div><div style="left:0;top:38px;width:254px;height:1px;background:#ababab"></div><div style="left:0;top:58px;width:254px;height:1px;background:#ababab"></div><div style="left:0;top:78px;width:254px;height:1px;background:#ababab"></div><div style="left:0;top:98px;width:254px;height:1px;background:#ababab"></div><div style="left:0;top:118px;width:254px;height:1px;background:#ababab"></div><div style="left:0;top:138px;width:254px;height:1px;background:#ababab"></div><div style="left:0;top:158px;width:254px;height:1px;background:#ababab"></div></div>
<div style="left:100px;top:264px;width:62px;height:18px;background:#fff;"></div>
<div style="left:97px;top:261px;width:259px;height:184px;border:2px solid #217346;"></div>
<div style="left:99px;top:263px;width:255px;height:180px;border:1px solid #fff;"></div>
<div style="left:352px;top:441px;width:6px;height:6px;background:#217346;border:1px solid #fff;"></div>
<div class="c" style="left:99px;top:264px;width:90px;padding-left:2.6px;letter-spacing:0.72px">Month</div>
<div class="c" style="left:163px;top:264px;width:63px;padding-left:2.6px;letter-spacing:-0.69px">Sales Revenue</div>
<div class="c" style="left:227px;top:264px;width:63px;padding-left:2.6px;letter-spacing:-0.36px">Cost of Sales</div>
<div class="c" style="left:291px;top:264px;width:90px;padding-left:2.6px;letter-spacing:0.30px">Profit</div>
<div class="c" style="left:99px;top:284px;width:90px;padding-left:2.6px;letter-spacing:-0.19px">January</div>
<div class="c" style="left:163px;top:284px;width:63px;text-align:right;padding-right:1.4px;letter-spacing:.09px">10000</div>
<div class="c" style="left:227px;top:284px;width:63px;text-align:right;padding-right:1.4px;letter-spacing:.09px">500</div>
<div class="c" style="left:291px;top:284px;width:63px;text-align:right;padding-right:1.4px;letter-spacing:.09px">9500</div>
<div class="c" style="left:99px;top:304px;width:90px;padding-left:2.6px;letter-spacing:0.02px">February</div>
<div class="c" style="left:163px;top:304px;width:63px;text-align:right;padding-right:1.4px;letter-spacing:.09px">12000</div>
<div class="c" style="left:227px;top:304px;width:63px;text-align:right;padding-right:1.4px;letter-spacing:.09px">600</div>
<div class="c" style="left:291px;top:304px;width:63px;text-align:right;padding-right:1.4px;letter-spacing:.09px">11400</div>
<div class="c" style="left:99px;top:324px;width:90px;padding-left:2.6px;letter-spacing:0.35px">March</div>
<div class="c" style="left:163px;top:324px;width:63px;text-align:right;padding-right:1.4px;letter-spacing:.09px">13000</div>
<div class="c" style="left:227px;top:324px;width:63px;text-align:right;padding-right:1.4px;letter-spacing:.09px">650</div>
<div class="c" style="left:291px;top:324px;width:63px;text-align:right;padding-right:1.4px;letter-spacing:.09px">12350</div>
<div class="c" style="left:99px;top:344px;width:90px;padding-left:2.6px;letter-spacing:0.32px">April</div>
<div class="c" style="left:163px;top:344px;width:63px;text-align:right;padding-right:1.4px;letter-spacing:.09px">10000</div>
<div class="c" style="left:227px;top:344px;width:63px;text-align:right;padding-right:1.4px;letter-spacing:.09px">500</div>
<div class="c" style="left:291px;top:344px;width:63px;text-align:right;padding-right:1.4px;letter-spacing:.09px">9500</div>
<div class="c" style="left:99px;top:364px;width:90px;padding-left:2.6px;letter-spacing:0.35px">May</div>
<div class="c" style="left:163px;top:364px;width:63px;text-align:right;padding-right:1.4px;letter-spacing:.09px">12000</div>
<div class="c" style="left:227px;top:364px;width:63px;text-align:right;padding-right:1.4px;letter-spacing:.09px">600</div>
<div class="c" style="left:291px;top:364px;width:63px;text-align:right;padding-right:1.4px;letter-spacing:.09px">11400</div>
<div class="c" style="left:99px;top:384px;width:90px;padding-left:2.6px;letter-spacing:-0.21px">June</div>
<div class="c" style="left:163px;top:384px;width:63px;text-align:right;padding-right:1.4px;letter-spacing:.09px">15000</div>
<div class="c" style="left:227px;top:384px;width:63px;text-align:right;padding-right:1.4px;letter-spacing:.09px">750</div>
<div class="c" style="left:291px;top:384px;width:63px;text-align:right;padding-right:1.4px;letter-spacing:.09px">14250</div>
<div class="c" style="left:99px;top:404px;width:90px;padding-left:2.6px;letter-spacing:-0.02px">July</div>
<div class="c" style="left:163px;top:404px;width:63px;text-align:right;padding-right:1.4px;letter-spacing:.09px">12000</div>
<div class="c" style="left:227px;top:404px;width:63px;text-align:right;padding-right:1.4px;letter-spacing:.09px">600</div>
<div class="c" style="left:291px;top:404px;width:63px;text-align:right;padding-right:1.4px;letter-spacing:.09px">11400</div>
<div class="c" style="left:99px;top:425px;width:90px;padding-left:2.6px;letter-spacing:0.05px">August</div>
<div class="c" style="left:163px;top:425px;width:63px;text-align:right;padding-right:1.4px;letter-spacing:.09px">14000</div>
<div class="c" style="left:227px;top:425px;width:63px;text-align:right;padding-right:1.4px;letter-spacing:.09px">700</div>
<div class="c" style="left:291px;top:425px;width:63px;text-align:right;padding-right:1.4px;letter-spacing:.09px">13300</div>
<div style="left:1125px;top:158px;width:548px;height:672px;background:#fff;border:1px solid #c6c6c6;"></div>
<div style="left:1126px;top:159px;width:546px;height:34px;background:#f0f0f0;"></div>
<div style="left:1126px;top:381.5px;width:546px;height:34px;background:#f0f0f0;"></div>
<div style="left:1126px;top:669px;width:546px;height:34px;background:#f0f0f0;"></div>
<span class="t" style="left:1131.60px;top:170.62px;font-size:12.5px;line-height:12.5px;color:#444;letter-spacing:-0.388px;font-weight:700;">Light</span>
<span class="t" style="left:1131.60px;top:394.22px;font-size:12.5px;line-height:12.5px;color:#444;letter-spacing:-0.153px;font-weight:700;">Medium</span>
<span class="t" style="left:1131.60px;top:680.72px;font-size:12.5px;line-height:12.5px;color:#444;letter-spacing:-0.374px;font-weight:700;">Dark</span>
<div style="left:1132px;top:199px;width:64px;height:48px;"><div style="left:0;top:0px;width:64px;height:10px;background-image:linear-gradient(to right,transparent 3.5px,#a2a2a2 3.5px,#a2a2a2 8.9px,transparent 8.9px);background-size:12.8px 1px;background-repeat:repeat-x;background-position:0 4.5px;"></div><div style="left:0;top:11px;width:64px;height:9px;background-color:#d9d9d9;background-image:linear-gradient(to right,transparent 3.5px,#8c8c8c 3.5px,#8c8c8c 8.9px,transparent 8.9px);background-size:12.8px 1px;background-repeat:repeat-x;background-position:0 4px;"></div><div style="left:0;top:20px;width:64px;height:9px;background-image:linear-gradient(to right,transparent 3.5px,#a2a2a2 3.5px,#a2a2a2 8.9px,transparent 8.9px);background-size:12.8px 1px;background-repeat:repeat-x;background-position:0 4px;"></div><div style="left:0;top:29px;width:64px;height:9px;background-color:#d9d9d9;background-image:linear-gradient(to right,transparent 3.5px,#8c8c8c 3.5px,#8c8c8c 8.9px,transparent 8.9px);background-size:12.8px 1px;background-repeat:repeat-x;background-position:0 4px;"></div><div style="left:0;top:38px;width:64px;height:9px;background-image:linear-gradient(to right,transparent 3.5px,#a2a2a2 3.5px,#a2a2a2 8.9px,transparent 8.9px);background-size:12.8px 1px;background-repeat:repeat-x;background-position:0 4px;"></div><div style="left:0px;top:0px;width:64px;height:1px;background:#000000"></div><div style="left:0px;top:10px;width:64px;height:1px;background:#000000"></div><div style="left:0px;top:47px;width:64px;height:1px;background:#000000"></div></div>
<div style="left:1210px;top:199px;width:64px;height:48px;"><div style="left:0;top:0px;width:64px;height:10px;background-image:linear-gradient(to right,transparent 3.5px,#a2a2a2 3.5px,#a2a2a2 8.9px,transparent 8.9px);background-size:12.8px 1px;background-repeat:repeat-x;background-position:0 4.5px;"></div><div style="left:0;top:11px;width:64px;height:9px;background-color:#d9e1f2;background-image:linear-gradient(to right,transparent 3.5px,#a2a2a2 3.5px,#a2a2a2 8.9px,transparent 8.9px);background-size:12.8px 1px;background-repeat:repeat-x;background-position:0 4px;"></div><div style="left:0;top:20px;width:64px;height:9px;background-image:linear-gradient(to right,transparent 3.5px,#a2a2a2 3.5px,#a2a2a2 8.9px,transparent 8.9px);background-size:12.8px 1px;background-repeat:repeat-x;background-position:0 4px;"></div><div style="left:0;top:29px;width:64px;height:9px;background-color:#d9e1f2;background-image:linear-gradient(to right,transparent 3.5px,#a2a2a2 3.5px,#a2a2a2 8.9px,transparent 8.9px);background-size:12.8px 1px;background-repeat:repeat-x;background-position:0 4px;"></div><div style="left:0;top:38px;width:64px;height:9px;background-image:linear-gradient(to right,transparent 3.5px,#a2a2a2 3.5px,#a2a2a2 8.9px,transparent 8.9px);background-size:12.8px 1px;background-repeat:repeat-x;background-position:0 4px;"></div><div style="left:0px;top:0px;width:64px;height:1px;background:#4472c4"></div><div style="left:0px;top:10px;width:64px;height:1px;background:#4472c4"></div><div style="left:0px;top:47px;width:64px;height:1px;background:#4472c4"></div></div>
<div style="left:1288px;top:199px;width:64px;height:48px;"><div style="left:0;top:0px;width:64px;height:10px;background-image:linear-gradient(to right,transparent 3.5px,#a2a2a2 3.5px,#a2a2a2 8.9px,transparent 8.9px);background-size:12.8px 1px;background-repeat:repeat-x;background-position:0 4.5px;"></div><div style="left:0;top:11px;width:64px;height:9px;background-color:#fce4d6;background-image:linear-gradient(to right,transparent 3.5px,#a2a2a2 3.5px,#a2a2a2 8.9px,transparent 8.9px);background-size:12.8px 1px;background-repeat:repeat-x;background-position:0 4px;"></div><div style="left:0;top:20px;width:64px;height:9px;background-image:linear-gradient(to right,transparent 3.5px,#a2a2a2 3.5px,#a2a2a2 8.9px,transparent 8.9px);background-size:12.8px 1px;background-repeat:repeat-x;background-position:0 4px;"></div><div style="left:0;top:29px;width:64px;height:9px;background-color:#fce4d6;background-image:linear-gradient(to right,transparent 3.5px,#a2a2a2 3.5px,#a2a2a2 8.9px,transparent 8.9px);background-size:12.8px 1px;background-repeat:repeat-x;background-position:0 4px;"></div><div style="left:0;top:38px;width:64px;height:9px;background-image:linear-gradient(to right,transparent 3.5px,#a2a2a2 3.5px,#a2a2a2 8.9px,transparent 8.9px);background-size:12.8px 1px;background-repeat:repeat-x;background-position:0 4px;"></div><div style="left:0px;top:0px;width:64px;height:1px;background:#ed7d31"></div><div style="left:0px;top:10px;width:64px;height:1px;background:#ed7d31"></div><div style="left:0px;top:47px;width:64px;height:1px;background:#ed7d31"></div></div>
<div style="left:1366px;top:199px;width:64px;height:48px;"><div style="left:0;top:0px;width:64px;height:10px;background-image:linear-gradient(to right,transparent 3.5px,#a2a2a2 3.5px,#a2a2a2 8.9px,transparent 8.9px);background-size:12.8px 1px;background-repeat:repeat-x;background-position:0 4.5px;"></div><div style="left:0;top:11px;width:64px;height:9px;background-color:#ededed;background-image:linear-gradient(to right,transparent 3.5px,#a2a2a2 3.5px,#a2a2a2 8.9px,transparent 8.9px);background-size:12.8px 1px;background-repeat:repeat-x;background-position:0 4px;"></div><div style="left:0;top:20px;width:64px;height:9px;background-image:linear-gradient(to right,transparent 3.5px,#a2a2a2 3.5px,#a2a2a2 8.9px,transparent 8.9px);background-size:12.8px 1px;background-repeat:repeat-x;background-position:0 4px;"></div><div style="left:0;top:29px;width:64px;height:9px;background-color:#ededed;background-image:linear-gradient(to right,transparent 3.5px,#a2a2a2 3.5px,#a2a2a2 8.9px,transparent 8.9px);background-size:12.8px 1px;background-repeat:repeat-x;background-position:0 4px;"></div><div style="left:0;top:38px;width:64px;height:9px;background-image:linear-gradient(to right,transparent 3.5px,#a2a2a2 3.5px,#a2a2a2 8.9px,transparent 8.9px);background-size:12.8px 1px;background-repeat:repeat-x;background-position:0 4px;"></div><div style="left:0px;top:0px;width:64px;height:1px;background:#a5a5a5"></div><div style="left:0px;top:10px;width:64px;height:1px;background:#a5a5a5"></div><div style="left:0px;top:47px;width:64px;height:1px;background:#a5a5a5"></div></div>
<div style="left:1444px;top:199px;width:64px;height:48px;"><div style="left:0;top:0px;width:64px;height:10px;background-image:linear-gradient(to right,transparent 3.5px,#a2a2a2 3.5px,#a2a2a2 8.9px,transparent 8.9px);background-size:12.8px 1px;background-repeat:repeat-x;background-position:0 4.5px;"></div><div style="left:0;top:11px;width:64px;height:9px;background-color:#fff2cc;background-image:linear-gradient(to right,transparent 3.5px,#a2a2a2 3.5px,#a2a2a2 8.9px,transparent 8.9px);background-size:12.8px 1px;background-repeat:repeat-x;background-position:0 4px;"></div><div style="left:0;top:20px;width:64px;height:9px;background-image:linear-gradient(to right,transparent 3.5px,#a2a2a2 3.5px,#a2a2a2 8.9px,transparent 8.9px);background-size:12.8px 1px;background-repeat:repeat-x;background-position:0 4px;"></div><div style="left:0;top:29px;width:64px;height:9px;background-color:#fff2cc;background-image:linear-gradient(to right,transparent 3.5px,#a2a2a2 3.5px,#a2a2a2 8.9px,transparent 8.9px);background-size:12.8px 1px;background-repeat:repeat-x;background-position:0 4px;"></div><div style="left:0;top:38px;width:64px;height:9px;background-image:linear-gradient(to right,transparent 3.5px,#a2a2a2 3.5px,#a2a2a2 8.9px,transparent 8.9px);background-size:12.8px 1px;background-repeat:repeat-x;background-position:0 4px;"></div><div style="left:0px;top:0px;width:64px;height:1px;background:#ffc000"></div><div style="left:0px;top:10px;width:64px;height:1px;background:#ffc000"></div><div style="left:0px;top:47px;width:64px;height:1px;background:#ffc000"></div></div>
<div style="left:1522px;top:199px;width:64px;height:48px;"><div style="left:0;top:0px;width:64px;height:10px;background-image:linear-gradient(to right,transparent 3.5px,#a2a2a2 3.5px,#a2a2a2 8.9px,transparent 8.9px);background-size:12.8px 1px;background-repeat:repeat-x;background-position:0 4.5px;"></div><div style="left:0;top:11px;width:64px;height:9px;background-color:#ddebf7;background-image:linear-gradient(to right,transparent 3.5px,#a2a2a2 3.5px,#a2a2a2 8.9px,transparent 8.9px);background-size:12.8px 1px;background-repeat:repeat-x;background-position:0 4px;"></div><div style="left:0;top:20px;width:64px;height:9px;background-image:linear-gradient(to right,transparent 3.5px,#a2a2a2 3.5px,#a2a2a2 8.9px,transparent 8.9px);background-size:12.8px 1px;background-repeat:repeat-x;background-position:0 4px;"></div><div style="left:0;top:29px;width:64px;height:9px;background-color:#ddebf7;background-image:linear-gradient(to right,transparent 3.5px,#a2a2a2 3.5px,#a2a2a2 8.9px,transparent 8.9px);background-size:12.8px 1px;background-repeat:repeat-x;background-position:0 4px;"></div><div style="left:0;top:38px;width:64px;height:9px;background-image:linear-gradient(to right,transparent 3.5px,#a2a2a2 3.5px,#a2a2a2 8.9px,transparent 8.9px);background-size:12.8px 1px;background-repeat:repeat-x;background-position:0 4px;"></div><div style="left:0px;top:0px;width:64px;height:1px;background:#5b9bd5"></div><div style="left:0px;top:10px;width:64px;height:1px;background:#5b9bd5"></div><div style="left:0px;top:47px;width:64px;height:1px;background:#5b9bd5"></div></div>
<div style="left:1600px;top:199px;width:64px;height:48px;"><div style="left:0;top:0px;width:64px;height:10px;background-image:linear-gradient(to right,transparent 3.5px,#a2a2a2 3.5px,#a2a2a2 8.9px,transparent 8.9px);background-size:12.8px 1px;background-repeat:repeat-x;background-position:0 4.5px;"></div><div style="left:0;top:11px;width:64px;height:9px;background-color:#e2efda;background-image:linear-gradient(to right,transparent 3.5px,#a2a2a2 3.5px,#a2a2a2 8.9px,transparent 8.9px);background-size:12.8px 1px;background-repeat:repeat-x;background-position:0 4px;"></div><div style="left:0;top:20px;width:64px;height:9px;background-image:linear-gradient(to right,transparent 3.5px,#a2a2a2 3.5px,#a2a2a2 8.9px,transparent 8.9px);background-size:12.8px 1px;background-repeat:repeat-x;background-position:0 4px;"></div><div style="left:0;top:29px;width:64px;height:9px;background-color:#e2efda;background-image:linear-gradient(to right,transparent 3.5px,#a2a2a2 3.5px,#a2a2a2 8.9px,transparent 8.9px);background-size:12.8px 1px;background-repeat:repeat-x;background-position:0 4px;"></div><div style="left:0;top:38px;width:64px;height:9px;background-image:linear-gradient(to right,transparent 3.5px,#a2a2a2 3.5px,#a2a2a2 8.9px,transparent 8.9px);background-size:12.8px 1px;background-repeat:repeat-x;background-position:0 4px;"></div><div style="left:0px;top:0px;width:64px;height:1px;background:#70ad47"></div><div style="left:0px;top:10px;width:64px;height:1px;background:#70ad47"></div><div style="left:0px;top:47px;width:64px;height:1px;background:#70ad47"></div></div>
<div style="left:1132px;top:262px;width:64px;height:48px;"><div style="left:0;top:0px;width:64px;height:10px;background-color:#000000;background-image:linear-gradient(to right,transparent 3.5px,#f4f4f4 3.5px,#f4f4f4 8.9px,transparent 8.9px);background-size:12.8px 1px;background-repeat:repeat-x;background-position:0 4.5px;"></div><div style="left:0;top:10px;width:64px;height:9px;background-image:linear-gradient(to right,transparent 3.5px,#8c8c8c 3.5px,#8c8c8c 8.9px,transparent 8.9px);background-size:12.8px 1px;background-repeat:repeat-x;background-position:0 4px;"></div><div style="left:0;top:19px;width:64px;height:9px;background-image:linear-gradient(to right,transparent 3.5px,#8c8c8c 3.5px,#8c8c8c 8.9px,transparent 8.9px);background-size:12.8px 1px;background-repeat:repeat-x;background-position:0 4px;"></div><div style="left:0;top:28px;width:64px;height:10px;background-image:linear-gradient(to right,transparent 3.5px,#8c8c8c 3.5px,#8c8c8c 8.9px,transparent 8.9px);background-size:12.8px 1px;background-repeat:repeat-x;background-position:0 4.5px;"></div><div style="left:0;top:38px;width:64px;height:10px;background-image:linear-gradient(to right,transparent 3.5px,#8c8c8c 3.5px,#8c8c8c 8.9px,transparent 8.9px);background-size:12.8px 1px;background-repeat:repeat-x;background-position:0 4.5px;"></div><div style="left:0px;top:0px;width:1px;height:48px;background:#000000"></div><div style="left:63px;top:0px;width:1px;height:48px;background:#000000"></div><div style="left:0px;top:47px;width:64px;height:1px;background:#000000"></div><div style="left:0px;top:18.5px;width:64px;height:1px;background:#000000"></div><div style="left:0px;top:27.5px;width:64px;height:1px;background:#000000"></div><div style="left:0px;top:37.5px;width:64px;height:1px;background:#000000"></div></div>
<div style="left:1210px;top:262px;width:64px;height:48px;"><div style="left:0;top:0px;width:64px;height:10px;background-color:#4472c4;background-image:linear-gradient(to right,transparent 3.5px,#f4f4f4 3.5px,#f4f4f4 8.9px,transparent 8.9px);background-size:12.8px 1px;background-repeat:repeat-x;background-position:0 4.5px;"></div><div style="left:0;top:10px;width:64px;height:9px;background-image:linear-gradient(to right,transparent 3.5px,#8c8c8c 3.5px,#8c8c8c 8.9px,transparent 8.9px);background-size:12.8px 1px;background-repeat:repeat-x;background-position:0 4px;"></div><div style="left:0;top:19px;width:64px;height:9px;background-image:linear-gradient(to right,transparent 3.5px,#8c8c8c 3.5px,#8c8c8c 8.9px,transparent 8.9px);background-size:12.8px 1px;background-repeat:repeat-x;background-position:0 4px;"></div><div style="left:0;top:28px;width:64px;height:10px;background-image:linear-gradient(to right,transparent 3.5px,#8c8c8c 3.5px,#8c8c8c 8.9px,transparent 8.9px);background-size:12.8px 1px;background-repeat:repeat-x;background-position:0 4.5px;"></div><div style="left:0;top:38px;width:64px;height:10px;background-image:linear-gradient(to right,transparent 3.5px,#8c8c8c 3.5px,#8c8c8c 8.9px,transparent 8.9px);background-size:12.8px 1px;background-repeat:repeat-x;background-position:0 4.5px;"></div><div style="left:0px;top:0px;width:1px;height:48px;background:#4472c4"></div><div style="left:63px;top:0px;width:1px;height:48px;background:#4472c4"></div><div style="left:0px;top:47px;width:64px;height:1px;background:#4472c4"></div><div style="left:0px;top:18.5px;width:64px;height:1px;background:#4472c4"></div><div style="left:0px;top:27.5px;width:64px;height:1px;background:#4472c4"></div><div style="left:0px;top:37.5px;width:64px;height:1px;background:#4472c4"></div></div>
<div style="left:1288px;top:262px;width:64px;height:48px;"><div style="left:0;top:0px;width:64px;height:10px;background-color:#ed7d31;background-image:linear-gradient(to right,transparent 3.5px,#f4f4f4 3.5px,#f4f4f4 8.9px,transparent 8.9px);background-size:12.8px 1px;background-repeat:repeat-x;background-position:0 4.5px;"></div><div style="left:0;top:10px;width:64px;height:9px;background-image:linear-gradient(to right,transparent 3.5px,#8c8c8c 3.5px,#8c8c8c 8.9px,transparent 8.9px);background-size:12.8px 1px;background-repeat:repeat-x;background-position:0 4px;"></div><div style="left:0;top:19px;width:64px;height:9px;background-image:linear-gradient(to right,transparent 3.5px,#8c8c8c 3.5px,#8c8c8c 8.9px,transparent 8.9px);background-size:12.8px 1px;background-repeat:repeat-x;background-position:0 4px;"></div><div style="left:0;top:28px;width:64px;height:10px;background-image:linear-gradient(to right,transparent 3.5px,#8c8c8c 3.5px,#8c8c8c 8.9px,transparent 8.9px);background-size:12.8px 1px;background-repeat:repeat-x;background-position:0 4.5px;"></div><div style="left:0;top:38px;width:64px;height:10px;background-image:linear-gradient(to right,transparent 3.5px,#8c8c8c 3.5px,#8c8c8c 8.9px,transparent 8.9px);background-size:12.8px 1px;background-repeat:repeat-x;background-position:0 4.5px;"></div><div style="left:0px;top:0px;width:1px;height:48px;background:#ed7d31"></div><div style="left:63px;top:0px;width:1px;height:48px;background:#ed7d31"></div><div style="left:0px;top:47px;width:64px;height:1px;background:#ed7d31"></div><div style="left:0px;top:18.5px;width:64px;height:1px;background:#ed7d31"></div><div style="left:0px;top:27.5px;width:64px;height:1px;background:#ed7d31"></div><div style="left:0px;top:37.5px;width:64px;height:1px;background:#ed7d31"></div></div>
<div style="left:1366px;top:262px;width:64px;height:48px;"><div style="left:0;top:0px;width:64px;height:10px;background-color:#a5a5a5;background-image:linear-gradient(to right,transparent 3.5px,#f4f4f4 3.5px,#f4f4f4 8.9px,transparent 8.9px);background-size:12.8px 1px;background-repeat:repeat-x;background-position:0 4.5px;"></div><div style="left:0;top:10px;width:64px;height:9px;background-image:linear-gradient(to right,transparent 3.5px,#8c8c8c 3.5px,#8c8c8c 8.9px,transparent 8.9px);background-size:12.8px 1px;background-repeat:repeat-x;background-position:0 4px;"></div><div style="left:0;top:19px;width:64px;height:9px;background-image:linear-gradient(to right,transparent 3.5px,#8c8c8c 3.5px,#8c8c8c 8.9px,transparent 8.9px);background-size:12.8px 1px;background-repeat:repeat-x;background-position:0 4px;"></div><div style="left:0;top:28px;width:64px;height:10px;background-image:linear-gradient(to right,transparent 3.5px,#8c8c8c 3.5px,#8c8c8c 8.9px,transparent 8.9px);background-size:12.8px 1px;background-repeat:repeat-x;background-position:0 4.5px;"></div><div style="left:0;top:38px;width:64px;height:10px;background-image:linear-gradient(to right,transparent 3.5px,#8c8c8c 3.5px,#8c8c8c 8.9px,transparent 8.9px);background-size:12.8px 1px;background-repeat:repeat-x;background-position:0 4.5px;"></div><div style="left:0px;top:0px;width:1px;height:48px;background:#a5a5a5"></div><div style="left:63px;top:0px;width:1px;height:48px;background:#a5a5a5"></div><div style="left:0px;top:47px;width:64px;height:1px;background:#a5a5a5"></div><div style="left:0px;top:18.5px;width:64px;height:1px;background:#a5a5a5"></div><div style="left:0px;top:27.5px;width:64px;height:1px;background:#a5a5a5"></div><div style="left:0px;top:37.5px;width:64px;height:1px;background:#a5a5a5"></div></div>
<div style="left:1444px;top:262px;width:64px;height:48px;"><div style="left:0;top:0px;width:64px;height:10px;background-color:#ffc000;background-image:linear-gradient(to right,transparent 3.5px,#f4f4f4 3.5px,#f4f4f4 8.9px,transparent 8.9px);background-size:12.8px 1px;background-repeat:repeat-x;background-position:0 4.5px;"></div><div style="left:0;top:10px;width:64px;height:9px;background-image:linear-gradient(to right,transparent 3.5px,#8c8c8c 3.5px,#8c8c8c 8.9px,transparent 8.9px);background-size:12.8px 1px;background-repeat:repeat-x;background-position:0 4px;"></div><div style="left:0;top:19px;width:64px;height:9px;background-image:linear-gradient(to right,transparent 3.5px,#8c8c8c 3.5px,#8c8c8c 8.9px,transparent 8.9px);background-size:12.8px 1px;background-repeat:repeat-x;background-position:0 4px;"></div><div style="left:0;top:28px;width:64px;height:10px;background-image:linear-gradient(to right,transparent 3.5px,#8c8c8c 3.5px,#8c8c8c 8.9px,transparent 8.9px);background-size:12.8px 1px;background-repeat:repeat-x;background-position:0 4.5px;"></div><div style="left:0;top:38px;width:64px;height:10px;background-image:linear-gradient(to right,transparent 3.5px,#8c8c8c 3.5px,#8c8c8c 8.9px,transparent 8.9px);background-size:12.8px 1px;background-repeat:repeat-x;background-position:0 4.5px;"></div><div style="left:0px;top:0px;width:1px;height:48px;background:#ffc000"></div><div style="left:63px;top:0px;width:1px;height:48px;background:#ffc000"></div><div style="left:0px;top:47px;width:64px;height:1px;background:#ffc000"></div><div style="left:0px;top:18.5px;width:64px;height:1px;background:#ffc000"></div><div style="left:0px;top:27.5px;width:64px;height:1px;background:#ffc000"></div><div style="left:0px;top:37.5px;width:64px;height:1px;background:#ffc000"></div></div>
<div style="left:1522px;top:262px;width:64px;height:48px;"><div style="left:0;top:0px;width:64px;height:10px;background-color:#5b9bd5;background-image:linear-gradient(to right,transparent 3.5px,#f4f4f4 3.5px,#f4f4f4 8.9px,transparent 8.9px);background-size:12.8px 1px;background-repeat:repeat-x;background-position:0 4.5px;"></div><div style="left:0;top:10px;width:64px;height:9px;background-image:linear-gradient(to right,transparent 3.5px,#8c8c8c 3.5px,#8c8c8c 8.9px,transparent 8.9px);background-size:12.8px 1px;background-repeat:repeat-x;background-position:0 4px;"></div><div style="left:0;top:19px;width:64px;height:9px;background-image:linear-gradient(to right,transparent 3.5px,#8c8c8c 3.5px,#8c8c8c 8.9px,transparent 8.9px);background-size:12.8px 1px;background-repeat:repeat-x;background-position:0 4px;"></div><div style="left:0;top:28px;width:64px;height:10px;background-image:linear-gradient(to right,transparent 3.5px,#8c8c8c 3.5px,#8c8c8c 8.9px,transparent 8.9px);background-size:12.8px 1px;background-repeat:repeat-x;background-position:0 4.5px;"></div><div style="left:0;top:38px;width:64px;height:10px;background-image:linear-gradient(to right,transparent 3.5px,#8c8c8c 3.5px,#8c8c8c 8.9px,transparent 8.9px);background-size:12.8px 1px;background-repeat:repeat-x;background-position:0 4.5px;"></div><div style="left:0px;top:0px;width:1px;height:48px;background:#5b9bd5"></div><div style="left:63px;top:0px;width:1px;height:48px;background:#5b9bd5"></div><div style="left:0px;top:47px;width:64px;height:1px;background:#5b9bd5"></div><div style="left:0px;top:18.5px;width:64px;height:1px;background:#5b9bd5"></div><div style="left:0px;top:27.5px;width:64px;height:1px;background:#5b9bd5"></div><div style="left:0px;top:37.5px;width:64px;height:1px;background:#5b9bd5"></div></div>
<div style="left:1600px;top:262px;width:64px;height:48px;"><div style="left:0;top:0px;width:64px;height:10px;background-color:#70ad47;background-image:linear-gradient(to right,transparent 3.5px,#f4f4f4 3.5px,#f4f4f4 8.9px,transparent 8.9px);background-size:12.8px 1px;background-repeat:repeat-x;background-position:0 4.5px;"></div><div style="left:0;top:10px;width:64px;height:9px;background-image:linear-gradient(to right,transparent 3.5px,#8c8c8c 3.5px,#8c8c8c 8.9px,transparent 8.9px);background-size:12.8px 1px;background-repeat:repeat-x;background-position:0 4px;"></div><div style="left:0;top:19px;width:64px;height:9px;background-image:linear-gradient(to right,transparent 3.5px,#8c8c8c 3.5px,#8c8c8c 8.9px,transparent 8.9px);background-size:12.8px 1px;background-repeat:repeat-x;background-position:0 4px;"></div><div style="left:0;top:28px;width:64px;height:10px;background-image:linear-gradient(to right,transparent 3.5px,#8c8c8c 3.5px,#8c8c8c 8.9px,transparent 8.9px);background-size:12.8px 1px;background-repeat:repeat-x;background-position:0 4.5px;"></div><div style="left:0;top:38px;width:64px;height:10px;background-image:linear-gradient(to right,transparent 3.5px,#8c8c8c 3.5px,#8c8c8c 8.9px,transparent 8.9px);background-size:12.8px 1px;background-repeat:repeat-x;background-position:0 4.5px;"></div><div style="left:0px;top:0px;width:1px;height:48px;background:#70ad47"></div><div style="left:63px;top:0px;width:1px;height:48px;background:#70ad47"></div><div style="left:0px;top:47px;width:64px;height:1px;background:#70ad47"></div><div style="left:0px;top:18.5px;width:64px;height:1px;background:#70ad47"></div><div style="left:0px;top:27.5px;width:64px;height:1px;background:#70ad47"></div><div style="left:0px;top:37.5px;width:64px;height:1px;background:#70ad47"></div></div>
<div style="left:1132px;top:325px;width:64px;height:48px;"><div style="left:0;top:0px;width:64px;height:10px;background-image:linear-gradient(to right,transparent 3.5px,#8c8c8c 3.5px,#8c8c8c 8.9px,transparent 8.9px);background-size:12.8px 1px;background-repeat:repeat-x;background-position:0 4.5px;"></div><div style="left:0;top:10px;width:64px;height:9px;background-color:#d9d9d9;background-image:linear-gradient(to right,transparent 3.5px,#8c8c8c 3.5px,#8c8c8c 8.9px,transparent 8.9px);background-size:12.8px 1px;background-repeat:repeat-x;background-position:0 4px;"></div><div style="left:0;top:19px;width:64px;height:9px;background-image:linear-gradient(to right,transparent 3.5px,#8c8c8c 3.5px,#8c8c8c 8.9px,transparent 8.9px);background-size:12.8px 1px;background-repeat:repeat-x;background-position:0 4px;"></div><div style="left:0;top:28px;width:64px;height:10px;background-color:#d9d9d9;background-image:linear-gradient(to right,transparent 3.5px,#8c8c8c 3.5px,#8c8c8c 8.9px,transparent 8.9px);background-size:12.8px 1px;background-repeat:repeat-x;background-position:0 4.5px;"></div><div style="left:0;top:38px;width:64px;height:10px;background-image:linear-gradient(to right,transparent 3.5px,#8c8c8c 3.5px,#8c8c8c 8.9px,transparent 8.9px);background-size:12.8px 1px;background-repeat:repeat-x;background-position:0 4.5px;"></div><div style="left:0px;top:0px;width:1px;height:48px;background:#000000"></div><div style="left:12.4px;top:0px;width:1px;height:48px;background:#000000"></div><div style="left:25px;top:0px;width:1px;height:48px;background:#000000"></div><div style="left:37.6px;top:0px;width:1px;height:48px;background:#000000"></div><div style="left:50.2px;top:0px;width:1px;height:48px;background:#000000"></div><div style="left:63px;top:0px;width:1px;height:48px;background:#000000"></div><div style="left:0px;top:0px;width:64px;height:1px;background:#000000"></div><div style="left:0px;top:9.5px;width:64px;height:1px;background:#000000"></div><div style="left:0px;top:18.5px;width:64px;height:1px;background:#000000"></div><div style="left:0px;top:27.5px;width:64px;height:1px;background:#000000"></div><div style="left:0px;top:37.5px;width:64px;height:1px;background:#000000"></div><div style="left:0px;top:47px;width:64px;height:1px;background:#000000"></div></div>
<div style="left:1210px;top:325px;width:64px;height:48px;"><div style="left:0;top:0px;width:64px;height:10px;background-image:linear-gradient(to right,transparent 3.5px,#8c8c8c 3.5px,#8c8c8c 8.9px,transparent 8.9px);background-size:12.8px 1px;background-repeat:repeat-x;background-position:0 4.5px;"></div><div style="left:0;top:10px;width:64px;height:9px;background-color:#d9e1f2;background-image:linear-gradient(to right,transparent 3.5px,#8c8c8c 3.5px,#8c8c8c 8.9px,transparent 8.9px);background-size:12.8px 1px;background-repeat:repeat-x;background-position:0 4px;"></div><div style="left:0;top:19px;width:64px;height:9px;background-image:linear-gradient(to right,transparent 3.5px,#8c8c8c 3.5px,#8c8c8c 8.9px,transparent 8.9px);background-size:12.8px 1px;background-repeat:repeat-x;background-position:0 4px;"></div><div style="left:0;top:28px;width:64px;height:10px;background-color:#d9e1f2;background-image:linear-gradient(to right,transparent 3.5px,#8c8c8c 3.5px,#8c8c8c 8.9px,transparent 8.9px);background-size:12.8px 1px;background-repeat:repeat-x;background-position:0 4.5px;"></div><div style="left:0;top:38px;width:64px;height:10px;background-image:linear-gradient(to right,transparent 3.5px,#8c8c8c 3.5px,#8c8c8c 8.9px,transparent 8.9px);background-size:12.8px 1px;background-repeat:repeat-x;background-position:0 4.5px;"></div><div style="left:0px;top:0px;width:1px;height:48px;background:#4472c4"></div><div style="left:12.4px;top:0px;width:1px;height:48px;background:#4472c4"></div><div style="left:25px;top:0px;width:1px;height:48px;background:#4472c4"></div><div style="left:37.6px;top:0px;width:1px;height:48px;background:#4472c4"></div><div style="left:50.2px;top:0px;width:1px;height:48px;background:#4472c4"></div><div style="left:63px;top:0px;width:1px;height:48px;background:#4472c4"></div><div style="left:0px;top:0px;width:64px;height:1px;background:#4472c4"></div><div style="left:0px;top:9.5px;width:64px;height:1px;background:#4472c4"></div><div style="left:0px;top:18.5px;width:64px;height:1px;background:#4472c4"></div><div style="left:0px;top:27.5px;width:64px;height:1px;background:#4472c4"></div><div style="left:0px;top:37.5px;width:64px;height:1px;background:#4472c4"></div><div style="left:0px;top:47px;width:64px;height:1px;background:#4472c4"></div></div>
<div style="left:1288px;top:325px;width:64px;height:48px;"><div style="left:0;top:0px;width:64px;height:10px;background-image:linear-gradient(to right,transparent 3.5px,#8c8c8c 3.5px,#8c8c8c 8.9px,transparent 8.9px);background-size:12.8px 1px;background-repeat:repeat-x;background-position:0 4.5px;"></div><div style="left:0;top:10px;width:64px;height:9px;background-color:#fce4d6;background-image:linear-gradient(to right,transparent 3.5px,#8c8c8c 3.5px,#8c8c8c 8.9px,transparent 8.9px);background-size:12.8px 1px;background-repeat:repeat-x;background-position:0 4px;"></div><div style="left:0;top:19px;width:64px;height:9px;background-image:linear-gradient(to right,transparent 3.5px,#8c8c8c 3.5px,#8c8c8c 8.9px,transparent 8.9px);background-size:12.8px 1px;background-repeat:repeat-x;background-position:0 4px;"></div><div style="left:0;top:28px;width:64px;height:10px;background-color:#fce4d6;background-image:linear-gradient(to right,transparent 3.5px,#8c8c8c 3.5px,#8c8c8c 8.9px,transparent 8.9px);background-size:12.8px 1px;background-repeat:repeat-x;background-position:0 4.5px;"></div><div style="left:0;top:38px;width:64px;height:10px;background-image:linear-gradient(to right,transparent 3.5px,#8c8c8c 3.5px,#8c8c8c 8.9px,transparent 8.9px);background-size:12.8px 1px;background-repeat:repeat-x;background-position:0 4.5px;"></div><div style="left:0px;top:0px;width:1px;height:48px;background:#ed7d31"></div><div style="left:12.4px;top:0px;width:1px;height:48px;background:#ed7d31"></div><div style="left:25px;top:0px;width:1px;height:48px;background:#ed7d31"></div><div style="left:37.6px;top:0px;width:1px;height:48px;background:#ed7d31"></div><div style="left:50.2px;top:0px;width:1px;height:48px;background:#ed7d31"></div><div style="left:63px;top:0px;width:1px;height:48px;background:#ed7d31"></div><div style="left:0px;top:0px;width:64px;height:1px;background:#ed7d31"></div><div style="left:0px;top:9.5px;width:64px;height:1px;background:#ed7d31"></div><div style="left:0px;top:18.5px;width:64px;height:1px;background:#ed7d31"></div><div style="left:0px;top:27.5px;width:64px;height:1px;background:#ed7d31"></div><div style="left:0px;top:37.5px;width:64px;height:1px;background:#ed7d31"></div><div style="left:0px;top:47px;width:64px;height:1px;background:#ed7d31"></div></div>
<div style="left:1366px;top:325px;width:64px;height:48px;"><div style="left:0;top:0px;width:64px;height:10px;background-image:linear-gradient(to right,transparent 3.5px,#8c8c8c 3.5px,#8c8c8c 8.9px,transparent 8.9px);background-size:12.8px 1px;background-repeat:repeat-x;background-position:0 4.5px;"></div><div style="left:0;top:10px;width:64px;height:9px;background-color:#ededed;background-image:linear-gradient(to right,transparent 3.5px,#8c8c8c 3.5px,#8c8c8c 8.9px,transparent 8.9px);background-size:12.8px 1px;background-repeat:repeat-x;background-position:0 4px;"></div><div style="left:0;top:19px;width:64px;height:9px;background-image:linear-gradient(to right,transparent 3.5px,#8c8c8c 3.5px,#8c8c8c 8.9px,transparent 8.9px);background-size:12.8px 1px;background-repeat:repeat-x;background-position:0 4px;"></div><div style="left:0;top:28px;width:64px;height:10px;background-color:#ededed;background-image:linear-gradient(to right,transparent 3.5px,#8c8c8c 3.5px,#8c8c8c 8.9px,transparent 8.9px);background-size:12.8px 1px;background-repeat:repeat-x;background-position:0 4.5px;"></div><div style="left:0;top:38px;width:64px;height:10px;background-image:linear-gradient(to right,transparent 3.5px,#8c8c8c 3.5px,#8c8c8c 8.9px,transparent 8.9px);background-size:12.8px 1px;background-repeat:repeat-x;background-position:0 4.5px;"></div><div style="left:0px;top:0px;width:1px;height:48px;background:#a5a5a5"></div><div style="left:12.4px;top:0px;width:1px;height:48px;background:#a5a5a5"></div><div style="left:25px;top:0px;width:1px;height:48px;background:#a5a5a5"></div><div style="left:37.6px;top:0px;width:1px;height:48px;background:#a5a5a5"></div><div style="left:50.2px;top:0px;width:1px;height:48px;background:#a5a5a5"></div><div style="left:63px;top:0px;width:1px;height:48px;background:#a5a5a5"></div><div style="left:0px;top:0px;width:64px;height:1px;background:#a5a5a5"></div><div style="left:0px;top:9.5px;width:64px;height:1px;background:#a5a5a5"></div><div style="left:0px;top:18.5px;width:64px;height:1px;background:#a5a5a5"></div><div style="left:0px;top:27.5px;width:64px;height:1px;background:#a5a5a5"></div><div style="left:0px;top:37.5px;width:64px;height:1px;background:#a5a5a5"></div><div style="left:0px;top:47px;width:64px;height:1px;background:#a5a5a5"></div></div>
<div style="left:1444px;top:325px;width:64px;height:48px;"><div style="left:0;top:0px;width:64px;height:10px;background-image:linear-gradient(to right,transparent 3.5px,#8c8c8c 3.5px,#8c8c8c 8.9px,transparent 8.9px);background-size:12.8px 1px;background-repeat:repeat-x;background-position:0 4.5px;"></div><div style="left:0;top:10px;width:64px;height:9px;background-color:#fff2cc;background-image:linear-gradient(to right,transparent 3.5px,#8c8c8c 3.5px,#8c8c8c 8.9px,transparent 8.9px);background-size:12.8px 1px;background-repeat:repeat-x;background-position:0 4px;"></div><div style="left:0;top:19px;width:64px;height:9px;background-image:linear-gradient(to right,transparent 3.5px,#8c8c8c 3.5px,#8c8c8c 8.9px,transparent 8.9px);background-size:12.8px 1px;background-repeat:repeat-x;background-position:0 4px;"></div><div style="left:0;top:28px;width:64px;height:10px;background-color:#fff2cc;background-image:linear-gradient(to right,transparent 3.5px,#8c8c8c 3.5px,#8c8c8c 8.9px,transparent 8.9px);background-size:12.8px 1px;background-repeat:repeat-x;background-position:0 4.5px;"></div><div style="left:0;top:38px;width:64px;height:10px;background-image:linear-gradient(to right,transparent 3.5px,#8c8c8c 3.5px,#8c8c8c 8.9px,transparent 8.9px);background-size:12.8px 1px;background-repeat:repeat-x;background-position:0 4.5px;"></div><div style="left:0px;top:0px;width:1px;height:48px;background:#ffc000"></div><div style="left:12.4px;top:0px;width:1px;height:48px;background:#ffc000"></div><div style="left:25px;top:0px;width:1px;height:48px;background:#ffc000"></div><div style="left:37.6px;top:0px;width:1px;height:48px;background:#ffc000"></div><div style="left:50.2px;top:0px;width:1px;height:48px;background:#ffc000"></div><div style="left:63px;top:0px;width:1px;height:48px;background:#ffc000"></div><div style="left:0px;top:0px;width:64px;height:1px;background:#ffc000"></div><div style="left:0px;top:9.5px;width:64px;height:1px;background:#ffc000"></div><div style="left:0px;top:18.5px;width:64px;height:1px;background:#ffc000"></div><div style="left:0px;top:27.5px;width:64px;height:1px;background:#ffc000"></div><div style="left:0px;top:37.5px;width:64px;height:1px;background:#ffc000"></div><div style="left:0px;top:47px;width:64px;height:1px;background:#ffc000"></div></div>
<div style="left:1522px;top:325px;width:64px;height:48px;"><div style="left:0;top:0px;width:64px;height:10px;background-image:linear-gradient(to right,transparent 3.5px,#8c8c8c 3.5px,#8c8c8c 8.9px,transparent 8.9px);background-size:12.8px 1px;background-repeat:repeat-x;background-position:0 4.5px;"></div><div style="left:0;top:10px;width:64px;height:9px;background-color:#ddebf7;background-image:linear-gradient(to right,transparent 3.5px,#8c8c8c 3.5px,#8c8c8c 8.9px,transparent 8.9px);background-size:12.8px 1px;background-repeat:repeat-x;background-position:0 4px;"></div><div style="left:0;top:19px;width:64px;height:9px;background-image:linear-gradient(to right,transparent 3.5px,#8c8c8c 3.5px,#8c8c8c 8.9px,transparent 8.9px);background-size:12.8px 1px;background-repeat:repeat-x;background-position:0 4px;"></div><div style="left:0;top:28px;width:64px;height:10px;background-color:#ddebf7;background-image:linear-gradient(to right,transparent 3.5px,#8c8c8c 3.5px,#8c8c8c 8.9px,transparent 8.9px);background-size:12.8px 1px;background-repeat:repeat-x;background-position:0 4.5px;"></div><div style="left:0;top:38px;width:64px;height:10px;background-image:linear-gradient(to right,transparent 3.5px,#8c8c8c 3.5px,#8c8c8c 8.9px,transparent 8.9px);background-size:12.8px 1px;background-repeat:repeat-x;background-position:0 4.5px;"></div><div style="left:0px;top:0px;width:1px;height:48px;background:#5b9bd5"></div><div style="left:12.4px;top:0px;width:1px;height:48px;background:#5b9bd5"></div><div style="left:25px;top:0px;width:1px;height:48px;background:#5b9bd5"></div><div style="left:37.6px;top:0px;width:1px;height:48px;background:#5b9bd5"></div><div style="left:50.2px;top:0px;width:1px;height:48px;background:#5b9bd5"></div><div style="left:63px;top:0px;width:1px;height:48px;background:#5b9bd5"></div><div style="left:0px;top:0px;width:64px;height:1px;background:#5b9bd5"></div><div style="left:0px;top:9.5px;width:64px;height:1px;background:#5b9bd5"></div><div style="left:0px;top:18.5px;width:64px;height:1px;background:#5b9bd5"></div><div style="left:0px;top:27.5px;width:64px;height:1px;background:#5b9bd5"></div><div style="left:0px;top:37.5px;width:64px;height:1px;background:#5b9bd5"></div><div style="left:0px;top:47px;width:64px;height:1px;background:#5b9bd5"></div></div>
<div style="left:1600px;top:325px;width:64px;height:48px;"><div style="left:0;top:0px;width:64px;height:10px;background-image:linear-gradient(to right,transparent 3.5px,#8c8c8c 3.5px,#8c8c8c 8.9px,transparent 8.9px);background-size:12.8px 1px;background-repeat:repeat-x;background-position:0 4.5px;"></div><div style="left:0;top:10px;width:64px;height:9px;background-color:#e2efda;background-image:linear-gradient(to right,transparent 3.5px,#8c8c8c 3.5px,#8c8c8c 8.9px,transparent 8.9px);background-size:12.8px 1px;background-repeat:repeat-x;background-position:0 4px;"></div><div style="left:0;top:19px;width:64px;height:9px;background-image:linear-gradient(to right,transparent 3.5px,#8c8c8c 3.5px,#8c8c8c 8.9px,transparent 8.9px);background-size:12.8px 1px;background-repeat:repeat-x;background-position:0 4px;"></div><div style="left:0;top:28px;width:64px;height:10px;background-color:#e2efda;background-image:linear-gradient(to right,transparent 3.5px,#8c8c8c 3.5px,#8c8c8c 8.9px,transparent 8.9px);background-size:12.8px 1px;background-repeat:repeat-x;background-position:0 4.5px;"></div><div style="left:0;top:38px;width:64px;height:10px;background-image:linear-gradient(to right,transparent 3.5px,#8c8c8c 3.5px,#8c8c8c 8.9px,transparent 8.9px);background-size:12.8px 1px;background-repeat:repeat-x;background-position:0 4.5px;"></div><div style="left:0px;top:0px;width:1px;height:48px;background:#70ad47"></div><div style="left:12.4px;top:0px;width:1px;height:48px;background:#70ad47"></div><div style="left:25px;top:0px;width:1px;height:48px;background:#70ad47"></div><div style="left:37.6px;top:0px;width:1px;height:48px;background:#70ad47"></div><div style="left:50.2px;top:0px;width:1px;height:48px;background:#70ad47"></div><div style="left:63px;top:0px;width:1px;height:48px;background:#70ad47"></div><div style="left:0px;top:0px;width:64px;height:1px;background:#70ad47"></div><div style="left:0px;top:9.5px;width:64px;height:1px;background:#70ad47"></div><div style="left:0px;top:18.5px;width:64px;height:1px;background:#70ad47"></div><div style="left:0px;top:27.5px;width:64px;height:1px;background:#70ad47"></div><div style="left:0px;top:37.5px;width:64px;height:1px;background:#70ad47"></div><div style="left:0px;top:47px;width:64px;height:1px;background:#70ad47"></div></div>
<div style="left:1132px;top:422px;width:64px;height:48px;"><div style="left:0;top:0px;width:64px;height:10.5px;background-color:#000000;background-image:linear-gradient(to right,transparent 3.5px,#f4f4f4 3.5px,#f4f4f4 8.9px,transparent 8.9px);background-size:12.8px 1px;background-repeat:repeat-x;background-position:0 5px;"></div><div style="left:0;top:10.5px;width:64px;height:9px;background-color:#d9d9d9;background-image:linear-gradient(to right,transparent 3.5px,#8c8c8c 3.5px,#8c8c8c 8.9px,transparent 8.9px);background-size:12.8px 1px;background-repeat:repeat-x;background-position:0 4px;"></div><div style="left:0;top:19.5px;width:64px;height:9px;background-image:linear-gradient(to right,transparent 3.5px,#8c8c8c 3.5px,#8c8c8c 8.9px,transparent 8.9px);background-size:12.8px 1px;background-repeat:repeat-x;background-position:0 4px;"></div><div style="left:0;top:28.5px;width:64px;height:10px;background-color:#d9d9d9;background-image:linear-gradient(to right,transparent 3.5px,#8c8c8c 3.5px,#8c8c8c 8.9px,transparent 8.9px);background-size:12.8px 1px;background-repeat:repeat-x;background-position:0 4.5px;"></div><div style="left:0;top:38.5px;width:64px;height:9.5px;background-image:linear-gradient(to right,transparent 3.5px,#8c8c8c 3.5px,#8c8c8c 8.9px,transparent 8.9px);background-size:12.8px 1px;background-repeat:repeat-x;background-position:0 4px;"></div><div style="left:0px;top:0px;width:1px;height:48.5px;background:#000000"></div><div style="left:63px;top:0px;width:1px;height:48.5px;background:#000000"></div><div style="left:0px;top:47.5px;width:64px;height:1px;background:#000000"></div><div style="left:0px;top:19px;width:64px;height:1px;background:#000000"></div><div style="left:0px;top:28px;width:64px;height:1px;background:#000000"></div><div style="left:0px;top:38px;width:64px;height:1px;background:#000000"></div><div style="left:0px;top:10px;width:64px;height:1px;background:#000000"></div></div>
<div style="left:1210px;top:422px;width:64px;height:48px;"><div style="left:0;top:0px;width:64px;height:10.5px;background-color:#4472c4;background-image:linear-gradient(to right,transparent 3.5px,#f4f4f4 3.5px,#f4f4f4 8.9px,transparent 8.9px);background-size:12.8px 1px;background-repeat:repeat-x;background-position:0 5px;"></div><div style="left:0;top:10.5px;width:64px;height:9px;background-color:#d9e1f2;background-image:linear-gradient(to right,transparent 3.5px,#8c8c8c 3.5px,#8c8c8c 8.9px,transparent 8.9px);background-size:12.8px 1px;background-repeat:repeat-x;background-position:0 4px;"></div><div style="left:0;top:19.5px;width:64px;height:9px;background-image:linear-gradient(to right,transparent 3.5px,#8c8c8c 3.5px,#8c8c8c 8.9px,transparent 8.9px);background-size:12.8px 1px;background-repeat:repeat-x;background-position:0 4px;"></div><div style="left:0;top:28.5px;width:64px;height:10px;background-color:#d9e1f2;background-image:linear-gradient(to right,transparent 3.5px,#8c8c8c 3.5px,#8c8c8c 8.9px,transparent 8.9px);background-size:12.8px 1px;background-repeat:repeat-x;background-position:0 4.5px;"></div><div style="left:0;top:38.5px;width:64px;height:9.5px;background-image:linear-gradient(to right,transparent 3.5px,#8c8c8c 3.5px,#8c8c8c 8.9px,transparent 8.9px);background-size:12.8px 1px;background-repeat:repeat-x;background-position:0 4px;"></div><div style="left:0px;top:0px;width:1px;height:48.5px;background:#8ea9db"></div><div style="left:63px;top:0px;width:1px;height:48.5px;background:#8ea9db"></div><div style="left:0px;top:47.5px;width:64px;height:1px;background:#8ea9db"></div><div style="left:0px;top:19px;width:64px;height:1px;background:#8ea9db"></div><div style="left:0px;top:28px;width:64px;height:1px;background:#8ea9db"></div><div style="left:0px;top:38px;width:64px;height:1px;background:#8ea9db"></div></div>
<div style="left:1288px;top:422px;width:64px;height:48px;"><div style="left:0;top:0px;width:64px;height:10.5px;background-color:#ed7d31;background-image:linear-gradient(to right,transparent 3.5px,#f4f4f4 3.5px,#f4f4f4 8.9px,transparent 8.9px);background-size:12.8px 1px;background-repeat:repeat-x;background-position:0 5px;"></div><div style="left:0;top:10.5px;width:64px;height:9px;background-color:#fce4d6;background-image:linear-gradient(to right,transparent 3.5px,#8c8c8c 3.5px,#8c8c8c 8.9px,transparent 8.9px);background-size:12.8px 1px;background-repeat:repeat-x;background-position:0 4px;"></div><div style="left:0;top:19.5px;width:64px;height:9px;background-image:linear-gradient(to right,transparent 3.5px,#8c8c8c 3.5px,#8c8c8c 8.9px,transparent 8.9px);background-size:12.8px 1px;background-repeat:repeat-x;background-position:0 4px;"></div><div style="left:0;top:28.5px;width:64px;height:10px;background-color:#fce4d6;background-image:linear-gradient(to right,transparent 3.5px,#8c8c8c 3.5px,#8c8c8c 8.9px,transparent 8.9px);background-size:12.8px 1px;background-repeat:repeat-x;background-position:0 4.5px;"></div><div style="left:0;top:38.5px;width:64px;height:9.5px;background-image:linear-gradient(to right,transparent 3.5px,#8c8c8c 3.5px,#8c8c8c 8.9px,transparent 8.9px);background-size:12.8px 1px;background-repeat:repeat-x;background-position:0 4px;"></div><div style="left:0px;top:0px;width:1px;height:48.5px;background:#f4b084"></div><div style="left:63px;top:0px;width:1px;height:48.5px;background:#f4b084"></div><div style="left:0px;top:47.5px;width:64px;height:1px;background:#f4b084"></div><div style="left:0px;top:19px;width:64px;height:1px;background:#f4b084"></div><div style="left:0px;top:28px;width:64px;height:1px;background:#f4b084"></div><div style="left:0px;top:38px;width:64px;height:1px;background:#f4b084"></div></div>
<div style="left:1366px;top:422px;width:64px;height:48px;"><div style="left:0;top:0px;width:64px;height:10.5px;background-color:#a5a5a5;background-image:linear-gradient(to right,transparent 3.5px,#f4f4f4 3.5px,#f4f4f4 8.9px,transparent 8.9px);background-size:12.8px 1px;background-repeat:repeat-x;background-position:0 5px;"></div><div style="left:0;top:10.5px;width:64px;height:9px;background-color:#ededed;background-image:linear-gradient(to right,transparent 3.5px,#8c8c8c 3.5px,#8c8c8c 8.9px,transparent 8.9px);background-size:12.8px 1px;background-repeat:repeat-x;background-position:0 4px;"></div><div style="left:0;top:19.5px;width:64px;height:9px;background-image:linear-gradient(to right,transparent 3.5px,#8c8c8c 3.5px,#8c8c8c 8.9px,transparent 8.9px);background-size:12.8px 1px;background-repeat:repeat-x;background-position:0 4px;"></div><div style="left:0;top:28.5px;width:64px;height:10px;background-color:#ededed;background-image:linear-gradient(to right,transparent 3.5px,#8c8c8c 3.5px,#8c8c8c 8.9px,transparent 8.9px);background-size:12.8px 1px;background-repeat:repeat-x;background-position:0 4.5px;"></div><div style="left:0;top:38.5px;width:64px;height:9.5px;background-image:linear-gradient(to right,transparent 3.5px,#8c8c8c 3.5px,#8c8c8c 8.9px,transparent 8.9px);background-size:12.8px 1px;background-repeat:repeat-x;background-position:0 4px;"></div><div style="left:0px;top:0px;width:1px;height:48.5px;background:#c9c9c9"></div><div style="left:63px;top:0px;width:1px;height:48.5px;background:#c9c9c9"></div><div style="left:0px;top:47.5px;width:64px;height:1px;background:#c9c9c9"></div><div style="left:0px;top:19px;width:64px;height:1px;background:#c9c9c9"></div><div style="left:0px;top:28px;width:64px;height:1px;background:#c9c9c9"></div><div style="left:0px;top:38px;width:64px;height:1px;background:#c9c9c9"></div></div>
<div style="left:1444px;top:422px;width:64px;height:48px;"><div style="left:0;top:0px;width:64px;height:10.5px;background-color:#ffc000;background-image:linear-gradient(to right,transparent 3.5px,#f4f4f4 3.5px,#f4f4f4 8.9px,transparent 8.9px);background-size:12.8px 1px;background-repeat:repeat-x;background-position:0 5px;"></div><div style="left:0;top:10.5px;width:64px;height:9px;background-color:#fff2cc;background-image:linear-gradient(to right,transparent 3.5px,#8c8c8c 3.5px,#8c8c8c 8.9px,transparent 8.9px);background-size:12.8px 1px;background-repeat:repeat-x;background-position:0 4px;"></div><div style="left:0;top:19.5px;width:64px;height:9px;background-image:linear-gradient(to right,transparent 3.5px,#8c8c8c 3.5px,#8c8c8c 8.9px,transparent 8.9px);background-size:12.8px 1px;background-repeat:repeat-x;background-position:0 4px;"></div><div style="left:0;top:28.5px;width:64px;height:10px;background-color:#fff2cc;background-image:linear-gradient(to right,transparent 3.5px,#8c8c8c 3.5px,#8c8c8c 8.9px,transparent 8.9px);background-size:12.8px 1px;background-repeat:repeat-x;background-position:0 4.5px;"></div><div style="left:0;top:38.5px;width:64px;height:9.5px;background-image:linear-gradient(to right,transparent 3.5px,#8c8c8c 3.5px,#8c8c8c 8.9px,transparent 8.9px);background-size:12.8px 1px;background-repeat:repeat-x;background-position:0 4px;"></div><div style="left:0px;top:0px;width:1px;height:48.5px;background:#ffd966"></div><div style="left:63px;top:0px;width:1px;height:48.5px;background:#ffd966"></div><div style="left:0px;top:47.5px;width:64px;height:1px;background:#ffd966"></div><div style="left:0px;top:19px;width:64px;height:1px;background:#ffd966"></div><div style="left:0px;top:28px;width:64px;height:1px;background:#ffd966"></div><div style="left:0px;top:38px;width:64px;height:1px;background:#ffd966"></div></div>
<div style="left:1522px;top:422px;width:64px;height:48px;"><div style="left:0;top:0px;width:64px;height:10.5px;background-color:#5b9bd5;background-image:linear-gradient(to right,transparent 3.5px,#f4f4f4 3.5px,#f4f4f4 8.9px,transparent 8.9px);background-size:12.8px 1px;background-repeat:repeat-x;background-position:0 5px;"></div><div style="left:0;top:10.5px;width:64px;height:9px;background-color:#ddebf7;background-image:linear-gradient(to right,transparent 3.5px,#8c8c8c 3.5px,#8c8c8c 8.9px,transparent 8.9px);background-size:12.8px 1px;background-repeat:repeat-x;background-position:0 4px;"></div><div style="left:0;top:19.5px;width:64px;height:9px;background-image:linear-gradient(to right,transparent 3.5px,#8c8c8c 3.5px,#8c8c8c 8.9px,transparent 8.9px);background-size:12.8px 1px;background-repeat:repeat-x;background-position:0 4px;"></div><div style="left:0;top:28.5px;width:64px;height:10px;background-color:#ddebf7;background-image:linear-gradient(to right,transparent 3.5px,#8c8c8c 3.5px,#8c8c8c 8.9px,transparent 8.9px);background-size:12.8px 1px;background-repeat:repeat-x;background-position:0 4.5px;"></div><div style="left:0;top:38.5px;width:64px;height:9.5px;background-image:linear-gradient(to right,transparent 3.5px,#8c8c8c 3.5px,#8c8c8c 8.9px,transparent 8.9px);background-size:12.8px 1px;background-repeat:repeat-x;background-position:0 4px;"></div><div style="left:0px;top:0px;width:1px;height:48.5px;background:#9bc2e6"></div><div style="left:63px;top:0px;width:1px;height:48.5px;background:#9bc2e6"></div><div style="left:0px;top:47.5px;width:64px;height:1px;background:#9bc2e6"></div><div style="left:0px;top:19px;width:64px;height:1px;background:#9bc2e6"></div><div style="left:0px;top:28px;width:64px;height:1px;background:#9bc2e6"></div><div style="left:0px;top:38px;width:64px;height:1px;background:#9bc2e6"></div></div>
<div style="left:1600px;top:422px;width:64px;height:48px;"><div style="left:0;top:0px;width:64px;height:10.5px;background-color:#70ad47;background-image:linear-gradient(to right,transparent 3.5px,#f4f4f4 3.5px,#f4f4f4 8.9px,transparent 8.9px);background-size:12.8px 1px;background-repeat:repeat-x;background-position:0 5px;"></div><div style="left:0;top:10.5px;width:64px;height:9px;background-color:#e2efda;background-image:linear-gradient(to right,transparent 3.5px,#8c8c8c 3.5px,#8c8c8c 8.9px,transparent 8.9px);background-size:12.8px 1px;background-repeat:repeat-x;background-position:0 4px;"></div><div style="left:0;top:19.5px;width:64px;height:9px;background-image:linear-gradient(to right,transparent 3.5px,#8c8c8c 3.5px,#8c8c8c 8.9px,transparent 8.9px);background-size:12.8px 1px;background-repeat:repeat-x;background-position:0 4px;"></div><div style="left:0;top:28.5px;width:64px;height:10px;background-color:#e2efda;background-image:linear-gradient(to right,transparent 3.5px,#8c8c8c 3.5px,#8c8c8c 8.9px,transparent 8.9px);background-size:12.8px 1px;background-repeat:repeat-x;background-position:0 4.5px;"></div><div style="left:0;top:38.5px;width:64px;height:9.5px;background-image:linear-gradient(to right,transparent 3.5px,#8c8c8c 3.5px,#8c8c8c 8.9px,transparent 8.9px);background-size:12.8px 1px;background-repeat:repeat-x;background-position:0 4px;"></div><div style="left:0px;top:0px;width:1px;height:48.5px;background:#a9d08e"></div><div style="left:63px;top:0px;width:1px;height:48.5px;background:#a9d08e"></div><div style="left:0px;top:47.5px;width:64px;height:1px;background:#a9d08e"></div><div style="left:0px;top:19px;width:64px;height:1px;background:#a9d08e"></div><div style="left:0px;top:28px;width:64px;height:1px;background:#a9d08e"></div><div style="left:0px;top:38px;width:64px;height:1px;background:#a9d08e"></div></div>
<div style="left:1132px;top:486px;width:64px;height:48px;"><div style="left:0;top:0px;width:64px;height:8.5px;background-color:#000000;background-image:linear-gradient(to right,transparent 3.5px,#f4f4f4 3.5px,#f4f4f4 8.9px,transparent 8.9px);background-size:12.8px 1px;background-repeat:repeat-x;background-position:0 4px;"></div><div style="left:0;top:9.5px;width:64px;height:8.5px;background-color:#a6a6a6;background-image:linear-gradient(to right,transparent 3.5px,#747474 3.5px,#747474 8.9px,transparent 8.9px);background-size:12.8px 1px;background-repeat:repeat-x;background-position:0 4px;"></div><div style="left:0;top:19px;width:64px;height:8.5px;background-color:#d9d9d9;background-image:linear-gradient(to right,transparent 3.5px,#8c8c8c 3.5px,#8c8c8c 8.9px,transparent 8.9px);background-size:12.8px 1px;background-repeat:repeat-x;background-position:0 4px;"></div><div style="left:0;top:29px;width:64px;height:8.5px;background-color:#a6a6a6;background-image:linear-gradient(to right,transparent 3.5px,#747474 3.5px,#747474 8.9px,transparent 8.9px);background-size:12.8px 1px;background-repeat:repeat-x;background-position:0 4px;"></div><div style="left:0;top:39px;width:64px;height:9px;background-color:#d9d9d9;background-image:linear-gradient(to right,transparent 3.5px,#8c8c8c 3.5px,#8c8c8c 8.9px,transparent 8.9px);background-size:12.8px 1px;background-repeat:repeat-x;background-position:0 4px;"></div><div style="left:11.4px;top:0px;width:1.2px;height:48px;background:#fff"></div><div style="left:24.2px;top:0px;width:1.2px;height:48px;background:#fff"></div><div style="left:37.2px;top:0px;width:1.2px;height:48px;background:#fff"></div><div style="left:50.2px;top:0px;width:1.2px;height:48px;background:#fff"></div></div>
<div style="left:1210px;top:486px;width:64px;height:48px;"><div style="left:0;top:0px;width:64px;height:8.5px;background-color:#4472c4;background-image:linear-gradient(to right,transparent 3.5px,#f4f4f4 3.5px,#f4f4f4 8.9px,transparent 8.9px);background-size:12.8px 1px;background-repeat:repeat-x;background-position:0 4px;"></div><div style="left:0;top:9.5px;width:64px;height:8.5px;background-color:#b4c6e7;background-image:linear-gradient(to right,transparent 3.5px,#747474 3.5px,#747474 8.9px,transparent 8.9px);background-size:12.8px 1px;background-repeat:repeat-x;background-position:0 4px;"></div><div style="left:0;top:19px;width:64px;height:8.5px;background-color:#d9e1f2;background-image:linear-gradient(to right,transparent 3.5px,#8c8c8c 3.5px,#8c8c8c 8.9px,transparent 8.9px);background-size:12.8px 1px;background-repeat:repeat-x;background-position:0 4px;"></div><div style="left:0;top:29px;width:64px;height:8.5px;background-color:#b4c6e7;background-image:linear-gradient(to right,transparent 3.5px,#747474 3.5px,#747474 8.9px,transparent 8.9px);background-size:12.8px 1px;background-repeat:repeat-x;background-position:0 4px;"></div><div style="left:0;top:39px;width:64px;height:9px;background-color:#d9e1f2;background-image:linear-gradient(to right,transparent 3.5px,#8c8c8c 3.5px,#8c8c8c 8.9px,transparent 8.9px);background-size:12.8px 1px;background-repeat:repeat-x;background-position:0 4px;"></div><div style="left:11.4px;top:0px;width:1.2px;height:48px;background:#fff"></div><div style="left:24.2px;top:0px;width:1.2px;height:48px;background:#fff"></div><div style="left:37.2px;top:0px;width:1.2px;height:48px;background:#fff"></div><div style="left:50.2px;top:0px;width:1.2px;height:48px;background:#fff"></div></div>
<div style="left:1288px;top:486px;width:64px;height:48px;"><div style="left:0;top:0px;width:64px;height:8.5px;background-color:#ed7d31;background-image:linear-gradient(to right,transparent 3.5px,#f4f4f4 3.5px,#f4f4f4 8.9px,transparent 8.9px);background-size:12.8px 1px;background-repeat:repeat-x;background-position:0 4px;"></div><div style="left:0;top:9.5px;width:64px;height:8.5px;background-color:#f8cbad;background-image:linear-gradient(to right,transparent 3.5px,#747474 3.5px,#747474 8.9px,transparent 8.9px);background-size:12.8px 1px;background-repeat:repeat-x;background-position:0 4px;"></div><div style="left:0;top:19px;width:64px;height:8.5px;background-color:#fce4d6;background-image:linear-gradient(to right,transparent 3.5px,#8c8c8c 3.5px,#8c8c8c 8.9px,transparent 8.9px);background-size:12.8px 1px;background-repeat:repeat-x;background-position:0 4px;"></div><div style="left:0;top:29px;width:64px;height:8.5px;background-color:#f8cbad;background-image:linear-gradient(to right,transparent 3.5px,#747474 3.5px,#747474 8.9px,transparent 8.9px);background-size:12.8px 1px;background-repeat:repeat-x;background-position:0 4px;"></div><div style="left:0;top:39px;width:64px;height:9px;background-color:#fce4d6;background-image:linear-gradient(to right,transparent 3.5px,#8c8c8c 3.5px,#8c8c8c 8.9px,transparent 8.9px);background-size:12.8px 1px;background-repeat:repeat-x;background-position:0 4px;"></div><div style="left:11.4px;top:0px;width:1.2px;height:48px;background:#fff"></div><div style="left:24.2px;top:0px;width:1.2px;height:48px;background:#fff"></div><div style="left:37.2px;top:0px;width:1.2px;height:48px;background:#fff"></div><div style="left:50.2px;top:0px;width:1.2px;height:48px;background:#fff"></div></div>
<div style="left:1366px;top:486px;width:64px;height:48px;"><div style="left:0;top:0px;width:64px;height:8.5px;background-color:#a5a5a5;background-image:linear-gradient(to right,transparent 3.5px,#f4f4f4 3.5px,#f4f4f4 8.9px,transparent 8.9px);background-size:12.8px 1px;background-repeat:repeat-x;background-position:0 4px;"></div><div style="left:0;top:9.5px;width:64px;height:8.5px;background-color:#dbdbdb;background-image:linear-gradient(to right,transparent 3.5px,#747474 3.5px,#747474 8.9px,transparent 8.9px);background-size:12.8px 1px;background-repeat:repeat-x;background-position:0 4px;"></div><div style="left:0;top:19px;width:64px;height:8.5px;background-color:#ededed;background-image:linear-gradient(to right,transparent 3.5px,#8c8c8c 3.5px,#8c8c8c 8.9px,transparent 8.9px);background-size:12.8px 1px;background-repeat:repeat-x;background-position:0 4px;"></div><div style="left:0;top:29px;width:64px;height:8.5px;background-color:#dbdbdb;background-image:linear-gradient(to right,transparent 3.5px,#747474 3.5px,#747474 8.9px,transparent 8.9px);background-size:12.8px 1px;background-repeat:repeat-x;background-position:0 4px;"></div><div style="left:0;top:39px;width:64px;height:9px;background-color:#ededed;background-image:linear-gradient(to right,transparent 3.5px,#8c8c8c 3.5px,#8c8c8c 8.9px,transparent 8.9px);background-size:12.8px 1px;background-repeat:repeat-x;background-position:0 4px;"></div><div style="left:11.4px;top:0px;width:1.2px;height:48px;background:#fff"></div><div style="left:24.2px;top:0px;width:1.2px;height:48px;background:#fff"></div><div style="left:37.2px;top:0px;width:1.2px;height:48px;background:#fff"></div><div style="left:50.2px;top:0px;width:1.2px;height:48px;background:#fff"></div></div>
<div style="left:1444px;top:486px;width:64px;height:48px;"><div style="left:0;top:0px;width:64px;height:8.5px;background-color:#ffc000;background-image:linear-gradient(to right,transparent 3.5px,#f4f4f4 3.5px,#f4f4f4 8.9px,transparent 8.9px);background-size:12.8px 1px;background-repeat:repeat-x;background-position:0 4px;"></div><div style="left:0;top:9.5px;width:64px;height:8.5px;background-color:#ffe699;background-image:linear-gradient(to right,transparent 3.5px,#747474 3.5px,#747474 8.9px,transparent 8.9px);background-size:12.8px 1px;background-repeat:repeat-x;background-position:0 4px;"></div><div style="left:0;top:19px;width:64px;height:8.5px;background-color:#fff2cc;background-image:linear-gradient(to right,transparent 3.5px,#8c8c8c 3.5px,#8c8c8c 8.9px,transparent 8.9px);background-size:12.8px 1px;background-repeat:repeat-x;background-position:0 4px;"></div><div style="left:0;top:29px;width:64px;height:8.5px;background-color:#ffe699;background-image:linear-gradient(to right,transparent 3.5px,#747474 3.5px,#747474 8.9px,transparent 8.9px);background-size:12.8px 1px;background-repeat:repeat-x;background-position:0 4px;"></div><div style="left:0;top:39px;width:64px;height:9px;background-color:#fff2cc;background-image:linear-gradient(to right,transparent 3.5px,#8c8c8c 3.5px,#8c8c8c 8.9px,transparent 8.9px);background-size:12.8px 1px;background-repeat:repeat-x;background-position:0 4px;"></div><div style="left:11.4px;top:0px;width:1.2px;height:48px;background:#fff"></div><div style="left:24.2px;top:0px;width:1.2px;height:48px;background:#fff"></div><div style="left:37.2px;top:0px;width:1.2px;height:48px;background:#fff"></div><div style="left:50.2px;top:0px;width:1.2px;height:48px;background:#fff"></div></div>
<div style="left:1522px;top:486px;width:64px;height:48px;"><div style="left:0;top:0px;width:64px;height:8.5px;background-color:#5b9bd5;background-image:linear-gradient(to right,transparent 3.5px,#f4f4f4 3.5px,#f4f4f4 8.9px,transparent 8.9px);background-size:12.8px 1px;background-repeat:repeat-x;background-position:0 4px;"></div><div style="left:0;top:9.5px;width:64px;height:8.5px;background-color:#bdd7ee;background-image:linear-gradient(to right,transparent 3.5px,#747474 3.5px,#747474 8.9px,transparent 8.9px);background-size:12.8px 1px;background-repeat:repeat-x;background-position:0 4px;"></div><div style="left:0;top:19px;width:64px;height:8.5px;background-color:#ddebf7;background-image:linear-gradient(to right,transparent 3.5px,#8c8c8c 3.5px,#8c8c8c 8.9px,transparent 8.9px);background-size:12.8px 1px;background-repeat:repeat-x;background-position:0 4px;"></div><div style="left:0;top:29px;width:64px;height:8.5px;background-color:#bdd7ee;background-image:linear-gradient(to right,transparent 3.5px,#747474 3.5px,#747474 8.9px,transparent 8.9px);background-size:12.8px 1px;background-repeat:repeat-x;background-position:0 4px;"></div><div style="left:0;top:39px;width:64px;height:9px;background-color:#ddebf7;background-image:linear-gradient(to right,transparent 3.5px,#8c8c8c 3.5px,#8c8c8c 8.9px,transparent 8.9px);background-size:12.8px 1px;background-repeat:repeat-x;background-position:0 4px;"></div><div style="left:11.4px;top:0px;width:1.2px;height:48px;background:#fff"></div><div style="left:24.2px;top:0px;width:1.2px;height:48px;background:#fff"></div><div style="left:37.2px;top:0px;width:1.2px;height:48px;background:#fff"></div><div style="left:50.2px;top:0px;width:1.2px;height:48px;background:#fff"></div></div>
<div style="left:1600px;top:486px;width:64px;height:48px;"><div style="left:0;top:0px;width:64px;height:8.5px;background-color:#70ad47;background-image:linear-gradient(to right,transparent 3.5px,#f4f4f4 3.5px,#f4f4f4 8.9px,transparent 8.9px);background-size:12.8px 1px;background-repeat:repeat-x;background-position:0 4px;"></div><div style="left:0;top:9.5px;width:64px;height:8.5px;background-color:#c6e0b4;background-image:linear-gradient(to right,transparent 3.5px,#747474 3.5px,#747474 8.9px,transparent 8.9px);background-size:12.8px 1px;background-repeat:repeat-x;background-position:0 4px;"></div><div style="left:0;top:19px;width:64px;height:8.5px;background-color:#e2efda;background-image:linear-gradient(to right,transparent 3.5px,#8c8c8c 3.5px,#8c8c8c 8.9px,transparent 8.9px);background-size:12.8px 1px;background-repeat:repeat-x;background-position:0 4px;"></div><div style="left:0;top:29px;width:64px;height:8.5px;background-color:#c6e0b4;background-image:linear-gradient(to right,transparent 3.5px,#747474 3.5px,#747474 8.9px,transparent 8.9px);background-size:12.8px 1px;background-repeat:repeat-x;background-position:0 4px;"></div><div style="left:0;top:39px;width:64px;height:9px;background-color:#e2efda;background-image:linear-gradient(to right,transparent 3.5px,#8c8c8c 3.5px,#8c8c8c 8.9px,transparent 8.9px);background-size:12.8px 1px;background-repeat:repeat-x;background-position:0 4px;"></div><div style="left:11.4px;top:0px;width:1.2px;height:48px;background:#fff"></div><div style="left:24.2px;top:0px;width:1.2px;height:48px;background:#fff"></div><div style="left:37.2px;top:0px;width:1.2px;height:48px;background:#fff"></div><div style="left:50.2px;top:0px;width:1.2px;height:48px;background:#fff"></div></div>
<div style="left:1132px;top:549px;width:64px;height:48px;"><div style="left:0;top:0px;width:64px;height:10px;background-color:#000;background-image:linear-gradient(to right,transparent 3.5px,#f4f4f4 3.5px,#f4f4f4 8.9px,transparent 8.9px);background-size:12.8px 1px;background-repeat:repeat-x;background-position:0 4.5px;"></div><div style="left:0;top:10px;width:64px;height:9px;background-color:#d9d9d9;background-image:linear-gradient(to right,transparent 3.5px,#8c8c8c 3.5px,#8c8c8c 8.9px,transparent 8.9px);background-size:12.8px 1px;background-repeat:repeat-x;background-position:0 4px;"></div><div style="left:0;top:19px;width:64px;height:9.5px;background-image:linear-gradient(to right,transparent 3.5px,#8c8c8c 3.5px,#8c8c8c 8.9px,transparent 8.9px);background-size:12.8px 1px;background-repeat:repeat-x;background-position:0 4px;"></div><div style="left:0;top:28.5px;width:64px;height:9.5px;background-color:#d9d9d9;background-image:linear-gradient(to right,transparent 3.5px,#8c8c8c 3.5px,#8c8c8c 8.9px,transparent 8.9px);background-size:12.8px 1px;background-repeat:repeat-x;background-position:0 4px;"></div><div style="left:0;top:38px;width:64px;height:10px;background-image:linear-gradient(to right,transparent 3.5px,#8c8c8c 3.5px,#8c8c8c 8.9px,transparent 8.9px);background-size:12.8px 1px;background-repeat:repeat-x;background-position:0 4.5px;"></div><div style="left:0px;top:10px;width:1px;height:38px;background:#000"></div><div style="left:12.4px;top:10px;width:1px;height:38px;background:#000"></div><div style="left:25px;top:10px;width:1px;height:38px;background:#000"></div><div style="left:37.6px;top:10px;width:1px;height:38px;background:#000"></div><div style="left:50.2px;top:10px;width:1px;height:38px;background:#000"></div><div style="left:63px;top:10px;width:1px;height:38px;background:#000"></div><div style="left:0px;top:18.5px;width:64px;height:1px;background:#000"></div><div style="left:0px;top:27.8px;width:64px;height:1px;background:#000"></div><div style="left:0px;top:37.5px;width:64px;height:1px;background:#000"></div><div style="left:0px;top:47px;width:64px;height:1px;background:#000"></div></div>
<div style="left:1210px;top:549px;width:64px;height:48px;"><div style="left:0;top:1px;width:64px;height:9px;background-color:#4472c4;background-image:linear-gradient(to right,transparent 3.5px,#f4f4f4 3.5px,#f4f4f4 8.9px,transparent 8.9px);background-size:12.8px 1px;background-repeat:repeat-x;background-position:0 4px;"></div><div style="left:0;top:11.5px;width:64px;height:8.5px;background-color:#d9d9d9;background-image:linear-gradient(to right,transparent 3.5px,#8c8c8c 3.5px,#8c8c8c 8.9px,transparent 8.9px);background-size:12.8px 1px;background-repeat:repeat-x;background-position:0 4px;"></div><div style="left:0;top:20px;width:64px;height:9px;background-image:linear-gradient(to right,transparent 3.5px,#8c8c8c 3.5px,#8c8c8c 8.9px,transparent 8.9px);background-size:12.8px 1px;background-repeat:repeat-x;background-position:0 4px;"></div><div style="left:0;top:29px;width:64px;height:9px;background-color:#d9d9d9;background-image:linear-gradient(to right,transparent 3.5px,#8c8c8c 3.5px,#8c8c8c 8.9px,transparent 8.9px);background-size:12.8px 1px;background-repeat:repeat-x;background-position:0 4px;"></div><div style="left:0;top:38px;width:64px;height:9px;background-image:linear-gradient(to right,transparent 3.5px,#8c8c8c 3.5px,#8c8c8c 8.9px,transparent 8.9px);background-size:12.8px 1px;background-repeat:repeat-x;background-position:0 4px;"></div><div style="left:0px;top:0px;width:64px;height:1.2px;background:#000"></div><div style="left:0px;top:10px;width:64px;height:1.4px;background:#000"></div><div style="left:0px;top:47px;width:64px;height:1.2px;background:#000"></div></div>
<div style="left:1288px;top:549px;width:64px;height:48px;"><div style="left:0;top:1px;width:64px;height:9px;background-color:#ed7d31;background-image:linear-gradient(to right,transparent 3.5px,#f4f4f4 3.5px,#f4f4f4 8.9px,transparent 8.9px);background-size:12.8px 1px;background-repeat:repeat-x;background-position:0 4px;"></div><div style="left:0;top:11.5px;width:64px;height:8.5px;background-color:#d9d9d9;background-image:linear-gradient(to right,transparent 3.5px,#8c8c8c 3.5px,#8c8c8c 8.9px,transparent 8.9px);background-size:12.8px 1px;background-repeat:repeat-x;background-position:0 4px;"></div><div style="left:0;top:20px;width:64px;height:9px;background-image:linear-gradient(to right,transparent 3.5px,#8c8c8c 3.5px,#8c8c8c 8.9px,transparent 8.9px);background-size:12.8px 1px;background-repeat:repeat-x;background-position:0 4px;"></div><div style="left:0;top:29px;width:64px;height:9px;background-color:#d9d9d9;background-image:linear-gradient(to right,transparent 3.5px,#8c8c8c 3.5px,#8c8c8c 8.9px,transparent 8.9px);background-size:12.8px 1px;background-repeat:repeat-x;background-position:0 4px;"></div><div style="left:0;top:38px;width:64px;height:9px;background-image:linear-gradient(to right,transparent 3.5px,#8c8c8c 3.5px,#8c8c8c 8.9px,transparent 8.9px);background-size:12.8px 1px;background-repeat:repeat-x;background-position:0 4px;"></div><div style="left:0px;top:0px;width:64px;height:1.2px;background:#000"></div><div style="left:0px;top:10px;width:64px;height:1.4px;background:#000"></div><div style="left:0px;top:47px;width:64px;height:1.2px;background:#000"></div></div>
<div style="left:1366px;top:549px;width:64px;height:48px;"><div style="left:0;top:1px;width:64px;height:9px;background-color:#a5a5a5;background-image:linear-gradient(to right,transparent 3.5px,#f4f4f4 3.5px,#f4f4f4 8.9px,transparent 8.9px);background-size:12.8px 1px;background-repeat:repeat-x;background-position:0 4px;"></div><div style="left:0;top:11.5px;width:64px;height:8.5px;background-color:#d9d9d9;background-image:linear-gradient(to right,transparent 3.5px,#8c8c8c 3.5px,#8c8c8c 8.9px,transparent 8.9px);background-size:12.8px 1px;background-repeat:repeat-x;background-position:0 4px;"></div><div style="left:0;top:20px;width:64px;height:9px;background-image:linear-gradient(to right,transparent 3.5px,#8c8c8c 3.5px,#8c8c8c 8.9px,transparent 8.9px);background-size:12.8px 1px;background-repeat:repeat-x;background-position:0 4px;"></div><div style="left:0;top:29px;width:64px;height:9px;background-color:#d9d9d9;background-image:linear-gradient(to right,transparent 3.5px,#8c8c8c 3.5px,#8c8c8c 8.9px,transparent 8.9px);background-size:12.8px 1px;background-repeat:repeat-x;background-position:0 4px;"></div><div style="left:0;top:38px;width:64px;height:9px;background-image:linear-gradient(to right,transparent 3.5px,#8c8c8c 3.5px,#8c8c8c 8.9px,transparent 8.9px);background-size:12.8px 1px;background-repeat:repeat-x;background-position:0 4px;"></div><div style="left:0px;top:0px;width:64px;height:1.2px;background:#000"></div><div style="left:0px;top:10px;width:64px;height:1.4px;background:#000"></div><div style="left:0px;top:47px;width:64px;height:1.2px;background:#000"></div></div>
<div style="left:1444px;top:549px;width:64px;height:48px;"><div style="left:0;top:1px;width:64px;height:9px;background-color:#ffc000;background-image:linear-gradient(to right,transparent 3.5px,#f4f4f4 3.5px,#f4f4f4 8.9px,transparent 8.9px);background-size:12.8px 1px;background-repeat:repeat-x;background-position:0 4px;"></div><div style="left:0;top:11.5px;width:64px;height:8.5px;background-color:#d9d9d9;background-image:linear-gradient(to right,transparent 3.5px,#8c8c8c 3.5px,#8c8c8c 8.9px,transparent 8.9px);background-size:12.8px 1px;background-repeat:repeat-x;background-position:0 4px;"></div><div style="left:0;top:20px;width:64px;height:9px;background-image:linear-gradient(to right,transparent 3.5px,#8c8c8c 3.5px,#8c8c8c 8.9px,transparent 8.9px);background-size:12.8px 1px;background-repeat:repeat-x;background-position:0 4px;"></div><div style="left:0;top:29px;width:64px;height:9px;background-color:#d9d9d9;background-image:linear-gradient(to right,transparent 3.5px,#8c8c8c 3.5px,#8c8c8c 8.9px,transparent 8.9px);background-size:12.8px 1px;background-repeat:repeat-x;background-position:0 4px;"></div><div style="left:0;top:38px;width:64px;height:9px;background-image:linear-gradient(to right,transparent 3.5px,#8c8c8c 3.5px,#8c8c8c 8.9px,transparent 8.9px);background-size:12.8px 1px;background-repeat:repeat-x;background-position:0 4px;"></div><div style="left:0px;top:0px;width:64px;height:1.2px;background:#000"></div><div style="left:0px;top:10px;width:64px;height:1.4px;background:#000"></div><div style="left:0px;top:47px;width:64px;height:1.2px;background:#000"></div></div>
<div style="left:1522px;top:549px;width:64px;height:48px;"><div style="left:0;top:1px;width:64px;height:9px;background-color:#5b9bd5;background-image:linear-gradient(to right,transparent 3.5px,#f4f4f4 3.5px,#f4f4f4 8.9px,transparent 8.9px);background-size:12.8px 1px;background-repeat:repeat-x;background-position:0 4px;"></div><div style="left:0;top:11.5px;width:64px;height:8.5px;background-color:#d9d9d9;background-image:linear-gradient(to right,transparent 3.5px,#8c8c8c 3.5px,#8c8c8c 8.9px,transparent 8.9px);background-size:12.8px 1px;background-repeat:repeat-x;background-position:0 4px;"></div><div style="left:0;top:20px;width:64px;height:9px;background-image:linear-gradient(to right,transparent 3.5px,#8c8c8c 3.5px,#8c8c8c 8.9px,transparent 8.9px);background-size:12.8px 1px;background-repeat:repeat-x;background-position:0 4px;"></div><div style="left:0;top:29px;width:64px;height:9px;background-color:#d9d9d9;background-image:linear-gradient(to right,transparent 3.5px,#8c8c8c 3.5px,#8c8c8c 8.9px,transparent 8.9px);background-size:12.8px 1px;background-repeat:repeat-x;background-position:0 4px;"></div><div style="left:0;top:38px;width:64px;height:9px;background-image:linear-gradient(to right,transparent 3.5px,#8c8c8c 3.5px,#8c8c8c 8.9px,transparent 8.9px);background-size:12.8px 1px;background-repeat:repeat-x;background-position:0 4px;"></div><div style="left:0px;top:0px;width:64px;height:1.2px;background:#000"></div><div style="left:0px;top:10px;width:64px;height:1.4px;background:#000"></div><div style="left:0px;top:47px;width:64px;height:1.2px;background:#000"></div></div>
<div style="left:1600px;top:549px;width:64px;height:48px;"><div style="left:0;top:1px;width:64px;height:9px;background-color:#70ad47;background-image:linear-gradient(to right,transparent 3.5px,#f4f4f4 3.5px,#f4f4f4 8.9px,transparent 8.9px);background-size:12.8px 1px;background-repeat:repeat-x;background-position:0 4px;"></div><div style="left:0;top:11.5px;width:64px;height:8.5px;background-color:#d9d9d9;background-image:linear-gradient(to right,transparent 3.5px,#8c8c8c 3.5px,#8c8c8c 8.9px,transparent 8.9px);background-size:12.8px 1px;background-repeat:repeat-x;background-position:0 4px;"></div><div style="left:0;top:20px;width:64px;height:9px;background-image:linear-gradient(to right,transparent 3.5px,#8c8c8c 3.5px,#8c8c8c 8.9px,transparent 8.9px);background-size:12.8px 1px;background-repeat:repeat-x;background-position:0 4px;"></div><div style="left:0;top:29px;width:64px;height:9px;background-color:#d9d9d9;background-image:linear-gradient(to right,transparent 3.5px,#8c8c8c 3.5px,#8c8c8c 8.9px,transparent 8.9px);background-size:12.8px 1px;background-repeat:repeat-x;background-position:0 4px;"></div><div style="left:0;top:38px;width:64px;height:9px;background-image:linear-gradient(to right,transparent 3.5px,#8c8c8c 3.5px,#8c8c8c 8.9px,transparent 8.9px);background-size:12.8px 1px;background-repeat:repeat-x;background-position:0 4px;"></div><div style="left:0px;top:0px;width:64px;height:1.2px;background:#000"></div><div style="left:0px;top:10px;width:64px;height:1.4px;background:#000"></div><div style="left:0px;top:47px;width:64px;height:1.2px;background:#000"></div></div>
<div style="left:1132px;top:612px;width:64px;height:48px;"><div style="left:0;top:0px;width:64px;height:10px;background-color:#d9d9d9;background-image:linear-gradient(to right,transparent 3.5px,#8c8c8c 3.5px,#8c8c8c 8.9px,transparent 8.9px);background-size:12.8px 1px;background-repeat:repeat-x;background-position:0 4.5px;"></div><div style="left:0;top:10px;width:64px;height:9px;background-color:#a6a6a6;background-image:linear-gradient(to right,transparent 3.5px,#747474 3.5px,#747474 8.9px,transparent 8.9px);background-size:12.8px 1px;background-repeat:repeat-x;background-position:0 4px;"></div><div style="left:0;top:19px;width:64px;height:9px;background-color:#d9d9d9;background-image:linear-gradient(to right,transparent 3.5px,#8c8c8c 3.5px,#8c8c8c 8.9px,transparent 8.9px);background-size:12.8px 1px;background-repeat:repeat-x;background-position:0 4px;"></div><div style="left:0;top:28px;width:64px;height:10px;background-color:#a6a6a6;background-image:linear-gradient(to right,transparent 3.5px,#747474 3.5px,#747474 8.9px,transparent 8.9px);background-size:12.8px 1px;background-repeat:repeat-x;background-position:0 4.5px;"></div><div style="left:0;top:38px;width:64px;height:10px;background-color:#d9d9d9;background-image:linear-gradient(to right,transparent 3.5px,#8c8c8c 3.5px,#8c8c8c 8.9px,transparent 8.9px);background-size:12.8px 1px;background-repeat:repeat-x;background-position:0 4.5px;"></div><div style="left:0px;top:0px;width:1px;height:48px;background:#000"></div><div style="left:12.4px;top:0px;width:1px;height:48px;background:#000"></div><div style="left:25px;top:0px;width:1px;height:48px;background:#000"></div><div style="left:37.6px;top:0px;width:1px;height:48px;background:#000"></div><div style="left:50.2px;top:0px;width:1px;height:48px;background:#000"></div><div style="left:63px;top:0px;width:1px;height:48px;background:#000"></div><div style="left:0px;top:0px;width:64px;height:1px;background:#000"></div><div style="left:0px;top:9.5px;width:64px;height:1px;background:#000"></div><div style="left:0px;top:18.5px;width:64px;height:1px;background:#000"></div><div style="left:0px;top:27.5px;width:64px;height:1px;background:#000"></div><div style="left:0px;top:37.5px;width:64px;height:1px;background:#000"></div><div style="left:0px;top:47px;width:64px;height:1px;background:#000"></div></div>
<div style="left:1210px;top:612px;width:64px;height:48px;"><div style="left:0;top:0px;width:64px;height:10px;background-color:#d9e1f2;background-image:linear-gradient(to right,transparent 3.5px,#8c8c8c 3.5px,#8c8c8c 8.9px,transparent 8.9px);background-size:12.8px 1px;background-repeat:repeat-x;background-position:0 4.5px;"></div><div style="left:0;top:10px;width:64px;height:9px;background-color:#b4c6e7;background-image:linear-gradient(to right,transparent 3.5px,#747474 3.5px,#747474 8.9px,transparent 8.9px);background-size:12.8px 1px;background-repeat:repeat-x;background-position:0 4px;"></div><div style="left:0;top:19px;width:64px;height:9px;background-color:#d9e1f2;background-image:linear-gradient(to right,transparent 3.5px,#8c8c8c 3.5px,#8c8c8c 8.9px,transparent 8.9px);background-size:12.8px 1px;background-repeat:repeat-x;background-position:0 4px;"></div><div style="left:0;top:28px;width:64px;height:10px;background-color:#b4c6e7;background-image:linear-gradient(to right,transparent 3.5px,#747474 3.5px,#747474 8.9px,transparent 8.9px);background-size:12.8px 1px;background-repeat:repeat-x;background-position:0 4.5px;"></div><div style="left:0;top:38px;width:64px;height:10px;background-color:#d9e1f2;background-image:linear-gradient(to right,transparent 3.5px,#8c8c8c 3.5px,#8c8c8c 8.9px,transparent 8.9px);background-size:12.8px 1px;background-repeat:repeat-x;background-position:0 4.5px;"></div><div style="left:0px;top:0px;width:1px;height:48px;background:#8ea9db"></div><div style="left:12.4px;top:0px;width:1px;height:48px;background:#8ea9db"></div><div style="left:25px;top:0px;width:1px;height:48px;background:#8ea9db"></div><div style="left:37.6px;top:0px;width:1px;height:48px;background:#8ea9db"></div><div style="left:50.2px;top:0px;width:1px;height:48px;background:#8ea9db"></div><div style="left:63px;top:0px;width:1px;height:48px;background:#8ea9db"></div><div style="left:0px;top:0px;width:64px;height:1px;background:#8ea9db"></div><div style="left:0px;top:9.5px;width:64px;height:1px;background:#8ea9db"></div><div style="left:0px;top:18.5px;width:64px;height:1px;background:#8ea9db"></div><div style="left:0px;top:27.5px;width:64px;height:1px;background:#8ea9db"></div><div style="left:0px;top:37.5px;width:64px;height:1px;background:#8ea9db"></div><div style="left:0px;top:47px;width:64px;height:1px;background:#8ea9db"></div></div>
<div style="left:1288px;top:612px;width:64px;height:48px;"><div style="left:0;top:0px;width:64px;height:10px;background-color:#fce4d6;background-image:linear-gradient(to right,transparent 3.5px,#8c8c8c 3.5px,#8c8c8c 8.9px,transparent 8.9px);background-size:12.8px 1px;background-repeat:repeat-x;background-position:0 4.5px;"></div><div style="left:0;top:10px;width:64px;height:9px;background-color:#f8cbad;background-image:linear-gradient(to right,transparent 3.5px,#747474 3.5px,#747474 8.9px,transparent 8.9px);background-size:12.8px 1px;background-repeat:repeat-x;background-position:0 4px;"></div><div style="left:0;top:19px;width:64px;height:9px;background-color:#fce4d6;background-image:linear-gradient(to right,transparent 3.5px,#8c8c8c 3.5px,#8c8c8c 8.9px,transparent 8.9px);background-size:12.8px 1px;background-repeat:repeat-x;background-position:0 4px;"></div><div style="left:0;top:28px;width:64px;height:10px;background-color:#f8cbad;background-image:linear-gradient(to right,transparent 3.5px,#747474 3.5px,#747474 8.9px,transparent 8.9px);background-size:12.8px 1px;background-repeat:repeat-x;background-position:0 4.5px;"></div><div style="left:0;top:38px;width:64px;height:10px;background-color:#fce4d6;background-image:linear-gradient(to right,transparent 3.5px,#8c8c8c 3.5px,#8c8c8c 8.9px,transparent 8.9px);background-size:12.8px 1px;background-repeat:repeat-x;background-position:0 4.5px;"></div><div style="left:0px;top:0px;width:1px;height:48px;background:#f4b084"></div><div style="left:12.4px;top:0px;width:1px;height:48px;background:#f4b084"></div><div style="left:25px;top:0px;width:1px;height:48px;background:#f4b084"></div><div style="left:37.6px;top:0px;width:1px;height:48px;background:#f4b084"></div><div style="left:50.2px;top:0px;width:1px;height:48px;background:#f4b084"></div><div style="left:63px;top:0px;width:1px;height:48px;background:#f4b084"></div><div style="left:0px;top:0px;width:64px;height:1px;background:#f4b084"></div><div style="left:0px;top:9.5px;width:64px;height:1px;background:#f4b084"></div><div style="left:0px;top:18.5px;width:64px;height:1px;background:#f4b084"></div><div style="left:0px;top:27.5px;width:64px;height:1px;background:#f4b084"></div><div style="left:0px;top:37.5px;width:64px;height:1px;background:#f4b084"></div><div style="left:0px;top:47px;width:64px;height:1px;background:#f4b084"></div></div>
<div style="left:1366px;top:612px;width:64px;height:48px;"><div style="left:0;top:0px;width:64px;height:10px;background-color:#ededed;background-image:linear-gradient(to right,transparent 3.5px,#8c8c8c 3.5px,#8c8c8c 8.9px,transparent 8.9px);background-size:12.8px 1px;background-repeat:repeat-x;background-position:0 4.5px;"></div><div style="left:0;top:10px;width:64px;height:9px;background-color:#dbdbdb;background-image:linear-gradient(to right,transparent 3.5px,#747474 3.5px,#747474 8.9px,transparent 8.9px);background-size:12.8px 1px;background-repeat:repeat-x;background-position:0 4px;"></div><div style="left:0;top:19px;width:64px;height:9px;background-color:#ededed;background-image:linear-gradient(to right,transparent 3.5px,#8c8c8c 3.5px,#8c8c8c 8.9px,transparent 8.9px);background-size:12.8px 1px;background-repeat:repeat-x;background-position:0 4px;"></div><div style="left:0;top:28px;width:64px;height:10px;background-color:#dbdbdb;background-image:linear-gradient(to right,transparent 3.5px,#747474 3.5px,#747474 8.9px,transparent 8.9px);background-size:12.8px 1px;background-repeat:repeat-x;background-position:0 4.5px;"></div><div style="left:0;top:38px;width:64px;height:10px;background-color:#ededed;background-image:linear-gradient(to right,transparent 3.5px,#8c8c8c 3.5px,#8c8c8c 8.9px,transparent 8.9px);background-size:12.8px 1px;background-repeat:repeat-x;background-position:0 4.5px;"></div><div style="left:0px;top:0px;width:1px;height:48px;background:#c9c9c9"></div><div style="left:12.4px;top:0px;width:1px;height:48px;background:#c9c9c9"></div><div style="left:25px;top:0px;width:1px;height:48px;background:#c9c9c9"></div><div style="left:37.6px;top:0px;width:1px;height:48px;background:#c9c9c9"></div><div style="left:50.2px;top:0px;width:1px;height:48px;background:#c9c9c9"></div><div style="left:63px;top:0px;width:1px;height:48px;background:#c9c9c9"></div><div style="left:0px;top:0px;width:64px;height:1px;background:#c9c9c9"></div><div style="left:0px;top:9.5px;width:64px;height:1px;background:#c9c9c9"></div><div style="left:0px;top:18.5px;width:64px;height:1px;background:#c9c9c9"></div><div style="left:0px;top:27.5px;width:64px;height:1px;background:#c9c9c9"></div><div style="left:0px;top:37.5px;width:64px;height:1px;background:#c9c9c9"></div><div style="left:0px;top:47px;width:64px;height:1px;background:#c9c9c9"></div></div>
<div style="left:1444px;top:612px;width:64px;height:48px;"><div style="left:0;top:0px;width:64px;height:10px;background-color:#fff2cc;background-image:linear-gradient(to right,transparent 3.5px,#8c8c8c 3.5px,#8c8c8c 8.9px,transparent 8.9px);background-size:12.8px 1px;background-repeat:repeat-x;background-position:0 4.5px;"></div><div style="left:0;top:10px;width:64px;height:9px;background-color:#ffe699;background-image:linear-gradient(to right,transparent 3.5px,#747474 3.5px,#747474 8.9px,transparent 8.9px);background-size:12.8px 1px;background-repeat:repeat-x;background-position:0 4px;"></div><div style="left:0;top:19px;width:64px;height:9px;background-color:#fff2cc;background-image:linear-gradient(to right,transparent 3.5px,#8c8c8c 3.5px,#8c8c8c 8.9px,transparent 8.9px);background-size:12.8px 1px;background-repeat:repeat-x;background-position:0 4px;"></div><div style="left:0;top:28px;width:64px;height:10px;background-color:#ffe699;background-image:linear-gradient(to right,transparent 3.5px,#747474 3.5px,#747474 8.9px,transparent 8.9px);background-size:12.8px 1px;background-repeat:repeat-x;background-position:0 4.5px;"></div><div style="left:0;top:38px;width:64px;height:10px;background-color:#fff2cc;background-image:linear-gradient(to right,transparent 3.5px,#8c8c8c 3.5px,#8c8c8c 8.9px,transparent 8.9px);background-size:12.8px 1px;background-repeat:repeat-x;background-position:0 4.5px;"></div><div style="left:0px;top:0px;width:1px;height:48px;background:#ffd966"></div><div style="left:12.4px;top:0px;width:1px;height:48px;background:#ffd966"></div><div style="left:25px;top:0px;width:1px;height:48px;background:#ffd966"></div><div style="left:37.6px;top:0px;width:1px;height:48px;background:#ffd966"></div><div style="left:50.2px;top:0px;width:1px;height:48px;background:#ffd966"></div><div style="left:63px;top:0px;width:1px;height:48px;background:#ffd966"></div><div style="left:0px;top:0px;width:64px;height:1px;background:#ffd966"></div><div style="left:0px;top:9.5px;width:64px;height:1px;background:#ffd966"></div><div style="left:0px;top:18.5px;width:64px;height:1px;background:#ffd966"></div><div style="left:0px;top:27.5px;width:64px;height:1px;background:#ffd966"></div><div style="left:0px;top:37.5px;width:64px;height:1px;background:#ffd966"></div><div style="left:0px;top:47px;width:64px;height:1px;background:#ffd966"></div></div>
<div style="left:1522px;top:612px;width:64px;height:48px;"><div style="left:0;top:0px;width:64px;height:10px;background-color:#ddebf7;background-image:linear-gradient(to right,transparent 3.5px,#8c8c8c 3.5px,#8c8c8c 8.9px,transparent 8.9px);background-size:12.8px 1px;background-repeat:repeat-x;background-position:0 4.5px;"></div><div style="left:0;top:10px;width:64px;height:9px;background-color:#bdd7ee;background-image:linear-gradient(to right,transparent 3.5px,#747474 3.5px,#747474 8.9px,transparent 8.9px);background-size:12.8px 1px;background-repeat:repeat-x;background-position:0 4px;"></div><div style="left:0;top:19px;width:64px;height:9px;background-color:#ddebf7;background-image:linear-gradient(to right,transparent 3.5px,#8c8c8c 3.5px,#8c8c8c 8.9px,transparent 8.9px);background-size:12.8px 1px;background-repeat:repeat-x;background-position:0 4px;"></div><div style="left:0;top:28px;width:64px;height:10px;background-color:#bdd7ee;background-image:linear-gradient(to right,transparent 3.5px,#747474 3.5px,#747474 8.9px,transparent 8.9px);background-size:12.8px 1px;background-repeat:repeat-x;background-position:0 4.5px;"></div><div style="left:0;top:38px;width:64px;height:10px;background-color:#ddebf7;background-image:linear-gradient(to right,transparent 3.5px,#8c8c8c 3.5px,#8c8c8c 8.9px,transparent 8.9px);background-size:12.8px 1px;background-repeat:repeat-x;background-position:0 4.5px;"></div><div style="left:0px;top:0px;width:1px;height:48px;background:#9bc2e6"></div><div style="left:12.4px;top:0px;width:1px;height:48px;background:#9bc2e6"></div><div style="left:25px;top:0px;width:1px;height:48px;background:#9bc2e6"></div><div style="left:37.6px;top:0px;width:1px;height:48px;background:#9bc2e6"></div><div style="left:50.2px;top:0px;width:1px;height:48px;background:#9bc2e6"></div><div style="left:63px;top:0px;width:1px;height:48px;background:#9bc2e6"></div><div style="left:0px;top:0px;width:64px;height:1px;background:#9bc2e6"></div><div style="left:0px;top:9.5px;width:64px;height:1px;background:#9bc2e6"></div><div style="left:0px;top:18.5px;width:64px;height:1px;background:#9bc2e6"></div><div style="left:0px;top:27.5px;width:64px;height:1px;background:#9bc2e6"></div><div style="left:0px;top:37.5px;width:64px;height:1px;background:#9bc2e6"></div><div style="left:0px;top:47px;width:64px;height:1px;background:#9bc2e6"></div></div>
<div style="left:1600px;top:612px;width:64px;height:48px;"><div style="left:0;top:0px;width:64px;height:10px;background-color:#e2efda;background-image:linear-gradient(to right,transparent 3.5px,#8c8c8c 3.5px,#8c8c8c 8.9px,transparent 8.9px);background-size:12.8px 1px;background-repeat:repeat-x;background-position:0 4.5px;"></div><div style="left:0;top:10px;width:64px;height:9px;background-color:#c6e0b4;background-image:linear-gradient(to right,transparent 3.5px,#747474 3.5px,#747474 8.9px,transparent 8.9px);background-size:12.8px 1px;background-repeat:repeat-x;background-position:0 4px;"></div><div style="left:0;top:19px;width:64px;height:9px;background-color:#e2efda;background-image:linear-gradient(to right,transparent 3.5px,#8c8c8c 3.5px,#8c8c8c 8.9px,transparent 8.9px);background-size:12.8px 1px;background-repeat:repeat-x;background-position:0 4px;"></div><div style="left:0;top:28px;width:64px;height:10px;background-color:#c6e0b4;background-image:linear-gradient(to right,transparent 3.5px,#747474 3.5px,#747474 8.9px,transparent 8.9px);background-size:12.8px 1px;background-repeat:repeat-x;background-position:0 4.5px;"></div><div style="left:0;top:38px;width:64px;height:10px;background-color:#e2efda;background-image:linear-gradient(to right,transparent 3.5px,#8c8c8c 3.5px,#8c8c8c 8.9px,transparent 8.9px);background-size:12.8px 1px;background-repeat:repeat-x;background-position:0 4.5px;"></div><div style="left:0px;top:0px;width:1px;height:48px;background:#a9d08e"></div><div style="left:12.4px;top:0px;width:1px;height:48px;background:#a9d08e"></div><div style="left:25px;top:0px;width:1px;height:48px;background:#a9d08e"></div><div style="left:37.6px;top:0px;width:1px;height:48px;background:#a9d08e"></div><div style="left:50.2px;top:0px;width:1px;height:48px;background:#a9d08e"></div><div style="left:63px;top:0px;width:1px;height:48px;background:#a9d08e"></div><div style="left:0px;top:0px;width:64px;height:1px;background:#a9d08e"></div><div style="left:0px;top:9.5px;width:64px;height:1px;background:#a9d08e"></div><div style="left:0px;top:18.5px;width:64px;height:1px;background:#a9d08e"></div><div style="left:0px;top:27.5px;width:64px;height:1px;background:#a9d08e"></div><div style="left:0px;top:37.5px;width:64px;height:1px;background:#a9d08e"></div><div style="left:0px;top:47px;width:64px;height:1px;background:#a9d08e"></div></div>
<div style="left:1132px;top:709px;width:64px;height:48px;"><div style="left:0;top:0px;width:64px;height:9px;background-color:#000;background-image:linear-gradient(to right,transparent 3.5px,#f4f4f4 3.5px,#f4f4f4 8.9px,transparent 8.9px);background-size:12.8px 1px;background-repeat:repeat-x;background-position:0 4px;"></div><div style="left:0;top:10px;width:64px;height:9px;background-color:#404040;background-image:linear-gradient(to right,transparent 3.5px,#f4f4f4 3.5px,#f4f4f4 8.9px,transparent 8.9px);background-size:12.8px 1px;background-repeat:repeat-x;background-position:0 4px;"></div><div style="left:0;top:19px;width:64px;height:9.5px;background-color:#737373;background-image:linear-gradient(to right,transparent 3.5px,#f4f4f4 3.5px,#f4f4f4 8.9px,transparent 8.9px);background-size:12.8px 1px;background-repeat:repeat-x;background-position:0 4px;"></div><div style="left:0;top:28.5px;width:64px;height:9.5px;background-color:#404040;background-image:linear-gradient(to right,transparent 3.5px,#f4f4f4 3.5px,#f4f4f4 8.9px,transparent 8.9px);background-size:12.8px 1px;background-repeat:repeat-x;background-position:0 4px;"></div><div style="left:0;top:38px;width:64px;height:10px;background-color:#737373;background-image:linear-gradient(to right,transparent 3.5px,#f4f4f4 3.5px,#f4f4f4 8.9px,transparent 8.9px);background-size:12.8px 1px;background-repeat:repeat-x;background-position:0 4.5px;"></div></div>
<div style="left:1210px;top:709px;width:64px;height:48px;"><div style="left:0;top:0px;width:64px;height:9px;background-color:#000;background-image:linear-gradient(to right,transparent 3.5px,#f4f4f4 3.5px,#f4f4f4 8.9px,transparent 8.9px);background-size:12.8px 1px;background-repeat:repeat-x;background-position:0 4px;"></div><div style="left:0;top:10px;width:64px;height:9px;background-color:#305496;background-image:linear-gradient(to right,transparent 3.5px,#f4f4f4 3.5px,#f4f4f4 8.9px,transparent 8.9px);background-size:12.8px 1px;background-repeat:repeat-x;background-position:0 4px;"></div><div style="left:0;top:19px;width:64px;height:9.5px;background-color:#4472c4;background-image:linear-gradient(to right,transparent 3.5px,#f4f4f4 3.5px,#f4f4f4 8.9px,transparent 8.9px);background-size:12.8px 1px;background-repeat:repeat-x;background-position:0 4px;"></div><div style="left:0;top:28.5px;width:64px;height:9.5px;background-color:#305496;background-image:linear-gradient(to right,transparent 3.5px,#f4f4f4 3.5px,#f4f4f4 8.9px,transparent 8.9px);background-size:12.8px 1px;background-repeat:repeat-x;background-position:0 4px;"></div><div style="left:0;top:38px;width:64px;height:10px;background-color:#4472c4;background-image:linear-gradient(to right,transparent 3.5px,#f4f4f4 3.5px,#f4f4f4 8.9px,transparent 8.9px);background-size:12.8px 1px;background-repeat:repeat-x;background-position:0 4.5px;"></div></div>
<div style="left:1288px;top:709px;width:64px;height:48px;"><div style="left:0;top:0px;width:64px;height:9px;background-color:#000;background-image:linear-gradient(to right,transparent 3.5px,#f4f4f4 3.5px,#f4f4f4 8.9px,transparent 8.9px);background-size:12.8px 1px;background-repeat:repeat-x;background-position:0 4px;"></div><div style="left:0;top:10px;width:64px;height:9px;background-color:#c65911;background-image:linear-gradient(to right,transparent 3.5px,#f4f4f4 3.5px,#f4f4f4 8.9px,transparent 8.9px);background-size:12.8px 1px;background-repeat:repeat-x;background-position:0 4px;"></div><div style="left:0;top:19px;width:64px;height:9.5px;background-color:#ed7d31;background-image:linear-gradient(to right,transparent 3.5px,#f4f4f4 3.5px,#f4f4f4 8.9px,transparent 8.9px);background-size:12.8px 1px;background-repeat:repeat-x;background-position:0 4px;"></div><div style="left:0;top:28.5px;width:64px;height:9.5px;background-color:#c65911;background-image:linear-gradient(to right,transparent 3.5px,#f4f4f4 3.5px,#f4f4f4 8.9px,transparent 8.9px);background-size:12.8px 1px;background-repeat:repeat-x;background-position:0 4px;"></div><div style="left:0;top:38px;width:64px;height:10px;background-color:#ed7d31;background-image:linear-gradient(to right,transparent 3.5px,#f4f4f4 3.5px,#f4f4f4 8.9px,transparent 8.9px);background-size:12.8px 1px;background-repeat:repeat-x;background-position:0 4.5px;"></div></div>
<div style="left:1366px;top:709px;width:64px;height:48px;"><div style="left:0;top:0px;width:64px;height:9px;background-color:#000;background-image:linear-gradient(to right,transparent 3.5px,#f4f4f4 3.5px,#f4f4f4 8.9px,transparent 8.9px);background-size:12.8px 1px;background-repeat:repeat-x;background-position:0 4px;"></div><div style="left:0;top:10px;width:64px;height:9px;background-color:#7b7b7b;background-image:linear-gradient(to right,transparent 3.5px,#f4f4f4 3.5px,#f4f4f4 8.9px,transparent 8.9px);background-size:12.8px 1px;background-repeat:repeat-x;background-position:0 4px;"></div><div style="left:0;top:19px;width:64px;height:9.5px;background-color:#a5a5a5;background-image:linear-gradient(to right,transparent 3.5px,#f4f4f4 3.5px,#f4f4f4 8.9px,transparent 8.9px);background-size:12.8px 1px;background-repeat:repeat-x;background-position:0 4px;"></div><div style="left:0;top:28.5px;width:64px;height:9.5px;background-color:#7b7b7b;background-image:linear-gradient(to right,transparent 3.5px,#f4f4f4 3.5px,#f4f4f4 8.9px,transparent 8.9px);background-size:12.8px 1px;background-repeat:repeat-x;background-position:0 4px;"></div><div style="left:0;top:38px;width:64px;height:10px;background-color:#a5a5a5;background-image:linear-gradient(to right,transparent 3.5px,#f4f4f4 3.5px,#f4f4f4 8.9px,transparent 8.9px);background-size:12.8px 1px;background-repeat:repeat-x;background-position:0 4.5px;"></div></div>
<div style="left:1444px;top:709px;width:64px;height:48px;"><div style="left:0;top:0px;width:64px;height:9px;background-color:#000;background-image:linear-gradient(to right,transparent 3.5px,#f4f4f4 3.5px,#f4f4f4 8.9px,transparent 8.9px);background-size:12.8px 1px;background-repeat:repeat-x;background-position:0 4px;"></div><div style="left:0;top:10px;width:64px;height:9px;background-color:#bf8f00;background-image:linear-gradient(to right,transparent 3.5px,#f4f4f4 3.5px,#f4f4f4 8.9px,transparent 8.9px);background-size:12.8px 1px;background-repeat:repeat-x;background-position:0 4px;"></div><div style="left:0;top:19px;width:64px;height:9.5px;background-color:#ffc000;background-image:linear-gradient(to right,transparent 3.5px,#f4f4f4 3.5px,#f4f4f4 8.9px,transparent 8.9px);background-size:12.8px 1px;background-repeat:repeat-x;background-position:0 4px;"></div><div style="left:0;top:28.5px;width:64px;height:9.5px;background-color:#bf8f00;background-image:linear-gradient(to right,transparent 3.5px,#f4f4f4 3.5px,#f4f4f4 8.9px,transparent 8.9px);background-size:12.8px 1px;background-repeat:repeat-x;background-position:0 4px;"></div><div style="left:0;top:38px;width:64px;height:10px;background-color:#ffc000;background-image:linear-gradient(to right,transparent 3.5px,#f4f4f4 3.5px,#f4f4f4 8.9px,transparent 8.9px);background-size:12.8px 1px;background-repeat:repeat-x;background-position:0 4.5px;"></div></div>
<div style="left:1522px;top:709px;width:64px;height:48px;"><div style="left:0;top:0px;width:64px;height:9px;background-color:#000;background-image:linear-gradient(to right,transparent 3.5px,#f4f4f4 3.5px,#f4f4f4 8.9px,transparent 8.9px);background-size:12.8px 1px;background-repeat:repeat-x;background-position:0 4px;"></div><div style="left:0;top:10px;width:64px;height:9px;background-color:#2f75b5;background-image:linear-gradient(to right,transparent 3.5px,#f4f4f4 3.5px,#f4f4f4 8.9px,transparent 8.9px);background-size:12.8px 1px;background-repeat:repeat-x;background-position:0 4px;"></div><div style="left:0;top:19px;width:64px;height:9.5px;background-color:#5b9bd5;background-image:linear-gradient(to right,transparent 3.5px,#f4f4f4 3.5px,#f4f4f4 8.9px,transparent 8.9px);background-size:12.8px 1px;background-repeat:repeat-x;background-position:0 4px;"></div><div style="left:0;top:28.5px;width:64px;height:9.5px;background-color:#2f75b5;background-image:linear-gradient(to right,transparent 3.5px,#f4f4f4 3.5px,#f4f4f4 8.9px,transparent 8.9px);background-size:12.8px 1px;background-repeat:repeat-x;background-position:0 4px;"></div><div style="left:0;top:38px;width:64px;height:10px;background-color:#5b9bd5;background-image:linear-gradient(to right,transparent 3.5px,#f4f4f4 3.5px,#f4f4f4 8.9px,transparent 8.9px);background-size:12.8px 1px;background-repeat:repeat-x;background-position:0 4.5px;"></div></div>
<div style="left:1600px;top:709px;width:64px;height:48px;"><div style="left:0;top:0px;width:64px;height:9px;background-color:#000;background-image:linear-gradient(to right,transparent 3.5px,#f4f4f4 3.5px,#f4f4f4 8.9px,transparent 8.9px);background-size:12.8px 1px;background-repeat:repeat-x;background-position:0 4px;"></div><div style="left:0;top:10px;width:64px;height:9px;background-color:#548235;background-image:linear-gradient(to right,transparent 3.5px,#f4f4f4 3.5px,#f4f4f4 8.9px,transparent 8.9px);background-size:12.8px 1px;background-repeat:repeat-x;background-position:0 4px;"></div><div style="left:0;top:19px;width:64px;height:9.5px;background-color:#70ad47;background-image:linear-gradient(to right,transparent 3.5px,#f4f4f4 3.5px,#f4f4f4 8.9px,transparent 8.9px);background-size:12.8px 1px;background-repeat:repeat-x;background-position:0 4px;"></div><div style="left:0;top:28.5px;width:64px;height:9.5px;background-color:#548235;background-image:linear-gradient(to right,transparent 3.5px,#f4f4f4 3.5px,#f4f4f4 8.9px,transparent 8.9px);background-size:12.8px 1px;background-repeat:repeat-x;background-position:0 4px;"></div><div style="left:0;top:38px;width:64px;height:10px;background-color:#70ad47;background-image:linear-gradient(to right,transparent 3.5px,#f4f4f4 3.5px,#f4f4f4 8.9px,transparent 8.9px);background-size:12.8px 1px;background-repeat:repeat-x;background-position:0 4.5px;"></div></div>
<div style="left:1132px;top:772px;width:64px;height:48px;"><div style="left:0;top:0px;width:64px;height:9px;background-color:#000000;background-image:linear-gradient(to right,transparent 3.5px,#f4f4f4 3.5px,#f4f4f4 8.9px,transparent 8.9px);background-size:12.8px 1px;background-repeat:repeat-x;background-position:0 4px;"></div><div style="left:0;top:9px;width:64px;height:9.5px;background-color:#a6a6a6;background-image:linear-gradient(to right,transparent 3.5px,#747474 3.5px,#747474 8.9px,transparent 8.9px);background-size:12.8px 1px;background-repeat:repeat-x;background-position:0 4px;"></div><div style="left:0;top:18.5px;width:64px;height:9.5px;background-color:#d9d9d9;background-image:linear-gradient(to right,transparent 3.5px,#8c8c8c 3.5px,#8c8c8c 8.9px,transparent 8.9px);background-size:12.8px 1px;background-repeat:repeat-x;background-position:0 4px;"></div><div style="left:0;top:28px;width:64px;height:10px;background-color:#a6a6a6;background-image:linear-gradient(to right,transparent 3.5px,#747474 3.5px,#747474 8.9px,transparent 8.9px);background-size:12.8px 1px;background-repeat:repeat-x;background-position:0 4.5px;"></div><div style="left:0;top:38px;width:64px;height:10px;background-color:#d9d9d9;background-image:linear-gradient(to right,transparent 3.5px,#8c8c8c 3.5px,#8c8c8c 8.9px,transparent 8.9px);background-size:12.8px 1px;background-repeat:repeat-x;background-position:0 4.5px;"></div></div>
<div style="left:1210px;top:772px;width:64px;height:48px;"><div style="left:0;top:0px;width:64px;height:9px;background-color:#ed7d31;background-image:linear-gradient(to right,transparent 3.5px,#f4f4f4 3.5px,#f4f4f4 8.9px,transparent 8.9px);background-size:12.8px 1px;background-repeat:repeat-x;background-position:0 4px;"></div><div style="left:0;top:9px;width:64px;height:9.5px;background-color:#b4c6e7;background-image:linear-gradient(to right,transparent 3.5px,#747474 3.5px,#747474 8.9px,transparent 8.9px);background-size:12.8px 1px;background-repeat:repeat-x;background-position:0 4px;"></div><div style="left:0;top:18.5px;width:64px;height:9.5px;background-color:#d9e1f2;background-image:linear-gradient(to right,transparent 3.5px,#8c8c8c 3.5px,#8c8c8c 8.9px,transparent 8.9px);background-size:12.8px 1px;background-repeat:repeat-x;background-position:0 4px;"></div><div style="left:0;top:28px;width:64px;height:10px;background-color:#b4c6e7;background-image:linear-gradient(to right,transparent 3.5px,#747474 3.5px,#747474 8.9px,transparent 8.9px);background-size:12.8px 1px;background-repeat:repeat-x;background-position:0 4.5px;"></div><div style="left:0;top:38px;width:64px;height:10px;background-color:#d9e1f2;background-image:linear-gradient(to right,transparent 3.5px,#8c8c8c 3.5px,#8c8c8c 8.9px,transparent 8.9px);background-size:12.8px 1px;background-repeat:repeat-x;background-position:0 4.5px;"></div></div>
<div style="left:1288px;top:772px;width:64px;height:48px;"><div style="left:0;top:0px;width:64px;height:9px;background-color:#ffc000;background-image:linear-gradient(to right,transparent 3.5px,#f4f4f4 3.5px,#f4f4f4 8.9px,transparent 8.9px);background-size:12.8px 1px;background-repeat:repeat-x;background-position:0 4px;"></div><div style="left:0;top:9px;width:64px;height:9.5px;background-color:#dbdbdb;background-image:linear-gradient(to right,transparent 3.5px,#747474 3.5px,#747474 8.9px,transparent 8.9px);background-size:12.8px 1px;background-repeat:repeat-x;background-position:0 4px;"></div><div style="left:0;top:18.5px;width:64px;height:9.5px;background-color:#ededed;background-image:linear-gradient(to right,transparent 3.5px,#8c8c8c 3.5px,#8c8c8c 8.9px,transparent 8.9px);background-size:12.8px 1px;background-repeat:repeat-x;background-position:0 4px;"></div><div style="left:0;top:28px;width:64px;height:10px;background-color:#dbdbdb;background-image:linear-gradient(to right,transparent 3.5px,#747474 3.5px,#747474 8.9px,transparent 8.9px);background-size:12.8px 1px;background-repeat:repeat-x;background-position:0 4.5px;"></div><div style="left:0;top:38px;width:64px;height:10px;background-color:#ededed;background-image:linear-gradient(to right,transparent 3.5px,#8c8c8c 3.5px,#8c8c8c 8.9px,transparent 8.9px);background-size:12.8px 1px;background-repeat:repeat-x;background-position:0 4.5px;"></div></div>
<div style="left:1366px;top:772px;width:64px;height:48px;"><div style="left:0;top:0px;width:64px;height:9px;background-color:#70ad47;background-image:linear-gradient(to right,transparent 3.5px,#f4f4f4 3.5px,#f4f4f4 8.9px,transparent 8.9px);background-size:12.8px 1px;background-repeat:repeat-x;background-position:0 4px;"></div><div style="left:0;top:9px;width:64px;height:9.5px;background-color:#bdd7ee;background-image:linear-gradient(to right,transparent 3.5px,#747474 3.5px,#747474 8.9px,transparent 8.9px);background-size:12.8px 1px;background-repeat:repeat-x;background-position:0 4px;"></div><div style="left:0;top:18.5px;width:64px;height:9.5px;background-color:#ddebf7;background-image:linear-gradient(to right,transparent 3.5px,#8c8c8c 3.5px,#8c8c8c 8.9px,transparent 8.9px);background-size:12.8px 1px;background-repeat:repeat-x;background-position:0 4px;"></div><div style="left:0;top:28px;width:64px;height:10px;background-color:#bdd7ee;background-image:linear-gradient(to right,transparent 3.5px,#747474 3.5px,#747474 8.9px,transparent 8.9px);background-size:12.8px 1px;background-repeat:repeat-x;background-position:0 4.5px;"></div><div style="left:0;top:38px;width:64px;height:10px;background-color:#ddebf7;background-image:linear-gradient(to right,transparent 3.5px,#8c8c8c 3.5px,#8c8c8c 8.9px,transparent 8.9px);background-size:12.8px 1px;background-repeat:repeat-x;background-position:0 4.5px;"></div></div>
</div></body></html>
